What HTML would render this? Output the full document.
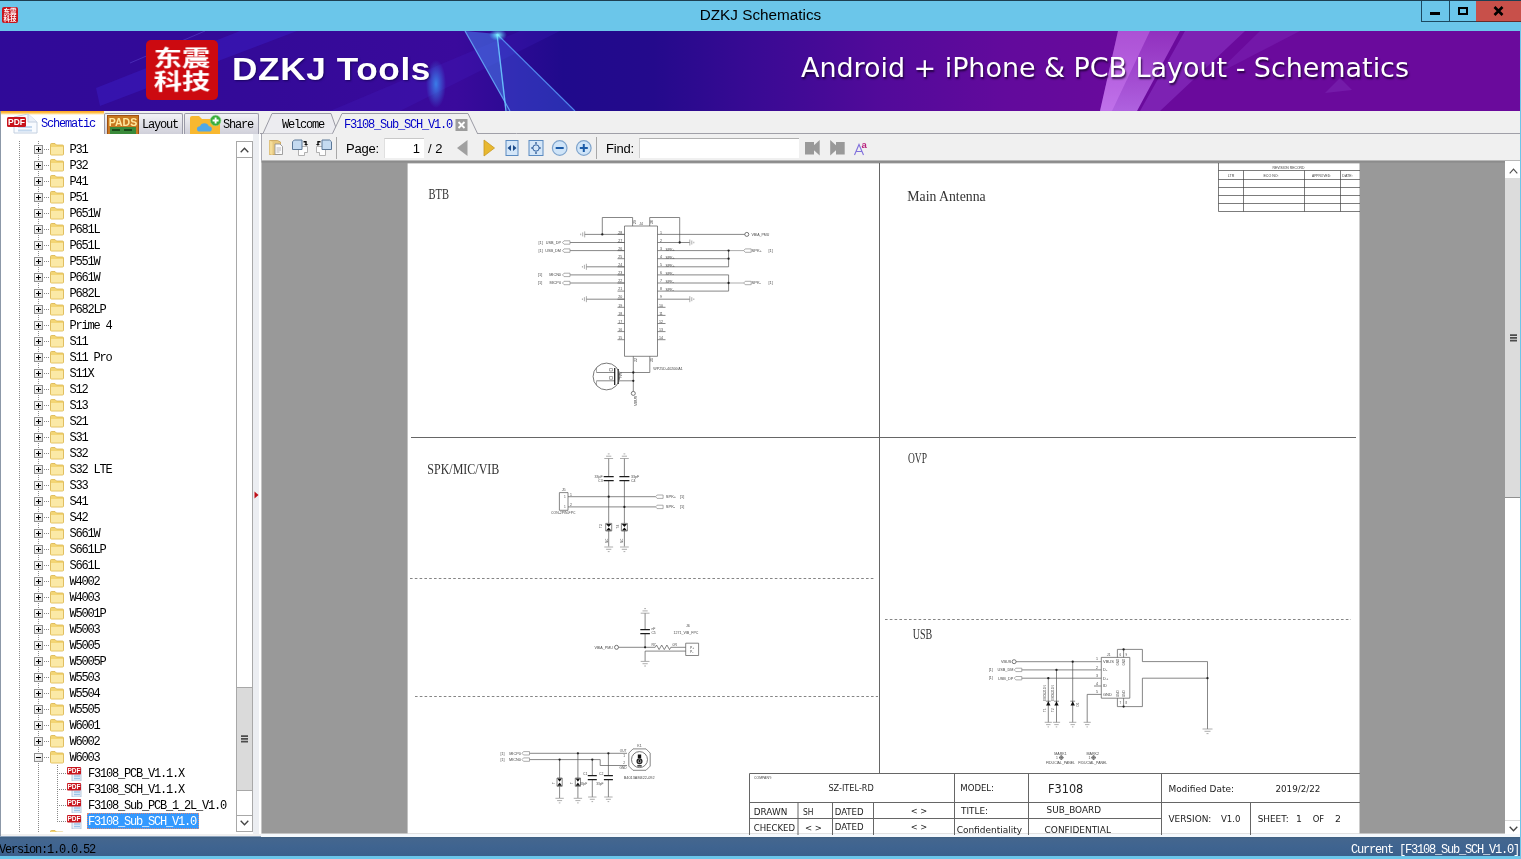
<!DOCTYPE html><html><head><meta charset="utf-8"><title>DZKJ Schematics</title><style>
*{box-sizing:border-box}
html,body{margin:0;padding:0}
body{width:1521px;height:859px;position:relative;overflow:hidden;background:#f0f0f0;font-family:"Liberation Sans",sans-serif}
.abs{position:absolute}
body>*{will-change:transform}
#titlebar{left:0;top:0;width:1521px;height:31px;background:#6bc6ea;border-top:1px solid #1d3f52}
#title{left:0;top:5px;width:1521px;text-align:center;font-size:15.3px;color:#000;line-height:20px}
#banner{left:0;top:31px;width:1520px;height:80px;overflow:hidden;background:linear-gradient(90deg,#300a98 0%,#340a98 18%,#3a0a9c 30%,#200a8c 37%,#240a8c 43%,#3a0a94 50%,#520a9a 58%,#620a9c 66%,#6a0a9c 75%,#6a0a9c 100%)}
.mono{font-family:"Liberation Mono","Noto Sans CJK SC",monospace;font-size:12px;letter-spacing:-1.2px;white-space:pre;line-height:14px;color:#000}
#left{left:1px;top:134px;width:252px;height:700px;background:#fff;overflow:hidden}
#status{left:0;top:836px;width:1520px;height:20px;border-top:1px solid #8ea3bd;background:linear-gradient(#3f5f80 0,#44668e 2px,#3f6490 50%,#3b608c)}
.row{position:absolute;left:0;height:16px;width:236px}
.pm{position:absolute;left:33px;width:9px;height:9px;border:1px solid #919191;background:linear-gradient(135deg,#fff,#dcdcdc)}
.pm:before{content:"";position:absolute;left:1px;top:3px;width:5px;height:1px;background:#000}
.pm.plus:after{content:"";position:absolute;left:3px;top:1px;width:1px;height:5px;background:#000}
.lbl{position:absolute;top:1px}
</style></head><body>
<div id="titlebar" class="abs"></div>
<div id="title" class="abs">DZKJ Schematics</div>
<div class="abs" style="left:2px;top:7px;width:16px;height:16px;background:#c8141c;border-radius:2px;color:#fff;font:6.5px/7px 'Noto Sans CJK SC','Liberation Sans',sans-serif;font-weight:bold;text-align:center;padding-top:1px;letter-spacing:0">东震<br>科技</div>
<div class="abs" style="left:1421px;top:1px;width:55px;height:21px;border:1px solid #1c4860;border-top:none;border-right:none"></div>
<div class="abs" style="left:1449px;top:1px;width:1px;height:21px;background:#1c4860"></div>
<div class="abs" style="left:1476px;top:1px;width:45px;height:21px;background:#c8504a;border-bottom:1px solid #6a2a28"></div>
<div class="abs" style="left:1430px;top:12px;width:10px;height:3px;background:#000"></div>
<div class="abs" style="left:1458px;top:7px;width:10px;height:8px;border:2px solid #000;border-top-width:2px"></div>
<svg class="abs" style="left:1493px;top:6px" width="11" height="10" viewBox="0 0 11 10"><path d="M1.5 1 L9.5 9 M9.5 1 L1.5 9" stroke="#000" stroke-width="2.6"/></svg>
<div id="banner" class="abs">
<svg class="abs" style="left:0;top:0" width="1520" height="80" viewBox="0 31 1520 80">
<defs><radialGradient id="glow"><stop offset="0" stop-color="#3aa0ff" stop-opacity=".75"/><stop offset="1" stop-color="#3aa0ff" stop-opacity="0"/></radialGradient><radialGradient id="star"><stop offset="0" stop-color="#8ff" stop-opacity=".95"/><stop offset="1" stop-color="#4cf" stop-opacity="0"/></radialGradient><linearGradient id="beam" x1="0" y1="0" x2="0" y2="1"><stop offset="0" stop-color="#4aa8ff" stop-opacity=".55"/><stop offset="1" stop-color="#3a78f0" stop-opacity=".45"/></linearGradient><linearGradient id="pk" x1="0" y1="0" x2="0" y2="1"><stop offset="0" stop-color="#c060e8" stop-opacity=".45"/><stop offset="1" stop-color="#c078f0" stop-opacity=".8"/></linearGradient></defs>
<path d="M240 31 L297 31 L100 106 L96 88 Z" fill="#3c22d0" opacity=".38"/>
<path d="M205 31 L130 63" stroke="#6a5ae0" stroke-width=".8" opacity=".5"/>
<path d="M330 111 L520 31 L560 31 L400 111 Z" fill="#4a28d0" opacity=".18"/>
<path d="M465 31 L497 34 L506 104 Z" fill="#4a8cf8" opacity=".5"/>
<path d="M497 34 L575 111 L507 111 L506 104 Z" fill="#3c6cf0" opacity=".36"/>
<path d="M465 31 L510 111" stroke="#6ab8ff" stroke-width="1.2" opacity=".8" fill="none"/>
<path d="M497 34 L506 111" stroke="#6cc8ff" stroke-width="1.4" opacity=".9" fill="none"/>
<path d="M497 34 L575 111" stroke="#5aa0ff" stroke-width="1.2" opacity=".8" fill="none"/>
<ellipse cx="498" cy="35" rx="9" ry="6" fill="url(#star)"/>
<ellipse cx="436" cy="84" rx="10" ry="24" fill="url(#glow)"/>
<path d="M1118 31 L1180 31 L1137 111 L1100 111 Z" fill="url(#pk)"/>
<path d="M1118 31 L1150 31 L1112 111 L1100 111 Z" fill="#e090ff" opacity=".35"/>
<path d="M1185 31 L1245 31 L1160 111 L1140 111 Z" fill="#a050e0" opacity=".35"/>
<path d="M1260 31 L1300 31 L1215 75 Z" fill="#9040d0" opacity=".25"/>
<path d="M1325 93 L1340 78 L1352 90 Z" fill="#a060e0" opacity=".2"/>
</svg>
</div>
<div class="abs" style="left:146px;top:40px;width:72px;height:60px;background:#cc0a10;border-radius:5px"></div>
<div class="abs" style="left:146px;top:40.500px;width:72px;text-align:center;color:#fff;font:bold 27px/28px 'Noto Sans CJK SC','Liberation Sans',sans-serif;letter-spacing:0;transform:scale(1.05,.83);transform-origin:36px 28px">东震<br>科技</div>
<div class="abs" style="left:231.5px;top:48.700px;font:bold 32px/40px 'Liberation Sans',sans-serif;color:#fff;text-shadow:1px 1px 2px rgba(0,0,40,.5);white-space:pre;transform:scaleX(1.10);transform-origin:0 0;letter-spacing:.55px">DZKJ Tools</div>
<div class="abs" style="left:801px;top:51.5px;letter-spacing:-.05px;font:27px/32px 'DejaVu Sans','Liberation Sans',sans-serif;color:#fff;text-shadow:1px 2px 2px rgba(20,0,40,.8);white-space:pre">Android + iPhone &amp; PCB Layout - Schematics</div>
<div class="abs" style="left:0;top:111px;width:1521px;height:23px;background:#f0f0f0"></div>
<div class="abs" style="left:1px;top:111px;width:103px;height:24px;background:linear-gradient(#ffa41c 0,#ffc452 2px,#ffe6b0 3px,#fff 4px)"></div>
<div class="abs" style="left:104px;top:113px;width:79px;height:21px;background:linear-gradient(#f2f2f6,#d0d0da);border:1px solid #9a9aa8;border-bottom:none;border-radius:2px 2px 0 0"></div>
<div class="abs" style="left:184px;top:113px;width:75px;height:21px;background:linear-gradient(#f2f2f6,#d0d0da);border:1px solid #9a9aa8;border-bottom:none;border-radius:2px 2px 0 0"></div>
<div class="abs mono" style="left:41px;top:117px;color:#0000c8">Schematic</div>
<div class="abs mono" style="left:142px;top:118px">Layout</div>
<div class="abs mono" style="left:223px;top:118px">Share</div>
<svg class="abs" style="left:6px;top:113px" width="34" height="22" viewBox="0 0 34 22"><path d="M8 4 L22 1 L31 9 L31 20 L8 20 Z" fill="#f8fbff" stroke="#c4d0e0" stroke-width="1"/><path d="M22 1 L22 9 L31 9" fill="#eaf0f8" stroke="#c4d0e0"/><path d="M12 14h14M12 17.500h14" stroke="#c4d8ee" stroke-width="1.800"/><rect x="1" y="4" width="19" height="10" rx="1.5" fill="#c8141c"/><text x="10.5" y="12.3" font-family="Liberation Sans,sans-serif" font-weight="bold" font-size="8.5" fill="#fff" text-anchor="middle">PDF</text></svg>
<svg class="abs" style="left:107px;top:115px" width="32" height="19" viewBox="0 0 32 19"><rect x=".5" y=".5" width="31" height="19" fill="#c87820" stroke="#a05010"/><rect x="3" y="12" width="26" height="7" fill="#3a8a3a"/><rect x="5" y="14" width="8" height="2" fill="#1a4a1a"/><rect x="17" y="14" width="8" height="2" fill="#1a4a1a"/><text x="16" y="10.5" font-family="Liberation Sans,sans-serif" font-weight="bold" font-size="10.5" fill="#ffe9a0" text-anchor="middle">PADS</text></svg>
<svg class="abs" style="left:188px;top:113px" width="34" height="22" viewBox="0 0 34 22"><path d="M2 5 Q2 3 4 3 L11 3 L14 6 L30 6 Q32 6 32 8 L32 22 L2 22 Z" fill="#f8b830"/><path d="M12 18.500 q-3 0 -3 -2.600 q0 -2.600 3 -2.600 q1 -3 4.400 -3 q3.400 0 4.400 3 q3 0 3 2.600 q0 2.600 -3 2.600 Z" fill="#50a8e8"/><circle cx="27.600" cy="7.500" r="5.300" fill="#3aae3c" stroke="#8fd48f" stroke-width=".6"/><path d="M24.600 7.500h6M27.600 4.500v6" stroke="#fff" stroke-width="1.900"/></svg>
<svg class="abs" style="left:260px;top:111px" width="1261" height="25" viewBox="260 111 1261 25">
<path d="M260 133.500 H1521" stroke="#a0a0a8" stroke-width="1" fill="none"/>
<path d="M263 133.500 L272 113.500 L331 113.500 L338 133.500" fill="#ececf0" stroke="#9a9aa4" stroke-width="1"/>
<path d="M332.500 134.500 L342 113.500 L468 113.500 L477.500 134.500 Z" fill="#f0f0f0" stroke="none"/>
<path d="M332.500 133.500 L342 113.500 L468 113.500 L477.500 133.500" fill="none" stroke="#9a9aa4" stroke-width="1"/>
<rect x="455.500" y="119" width="12" height="12" fill="#9c9c9c"/><path d="M458.500 122 l6 6 M464.500 122 l-6 6" stroke="#fff" stroke-width="1.800"/>
</svg>
<div class="abs mono" style="left:282px;top:118px">Welcome</div>
<div class="abs mono" style="left:344px;top:118px;color:#0000c8">F3108_Sub_SCH_V1.0</div><div id="left" class="abs">
<div class="abs" style="left:18px;top:7px;width:1px;height:700px;background:repeating-linear-gradient(#888 0 1px,transparent 1px 2px)"></div>
<div class="abs" style="left:37px;top:7px;width:1px;height:700px;background:repeating-linear-gradient(#888 0 1px,transparent 1px 2px)"></div>
<div class="row" style="top:7px"><div class="abs" style="left:43px;top:8px;width:6px;height:1px;background:repeating-linear-gradient(90deg,#888 0 1px,transparent 1px 2px)"></div><div class="pm plus" style="top:4px"></div><svg class="abs" style="left:47.800px;top:0" width="16" height="16" viewBox="0 0 16 16"><path d="M1.500 3.500 Q1.500 2.500 2.500 2.500 L6 2.500 L7.500 4 L13.500 4 Q14.500 4 14.500 5 L14.500 13 Q14.500 14 13.500 14 L2.500 14 Q1.500 14 1.500 13 Z" fill="#f3d574" stroke="#d9b24a" stroke-width=".8"/><path d="M2 6 H14 V13 Q14 13.500 13.500 13.500 H2.500 Q2 13.500 2 13 Z" fill="#fbe9a6"/></svg><span class="abs mono" style="left:68.600px;top:2px">P31</span></div>
<div class="row" style="top:23px"><div class="abs" style="left:43px;top:8px;width:6px;height:1px;background:repeating-linear-gradient(90deg,#888 0 1px,transparent 1px 2px)"></div><div class="pm plus" style="top:4px"></div><svg class="abs" style="left:47.800px;top:0" width="16" height="16" viewBox="0 0 16 16"><path d="M1.500 3.500 Q1.500 2.500 2.500 2.500 L6 2.500 L7.500 4 L13.500 4 Q14.500 4 14.500 5 L14.500 13 Q14.500 14 13.500 14 L2.500 14 Q1.500 14 1.500 13 Z" fill="#f3d574" stroke="#d9b24a" stroke-width=".8"/><path d="M2 6 H14 V13 Q14 13.500 13.500 13.500 H2.500 Q2 13.500 2 13 Z" fill="#fbe9a6"/></svg><span class="abs mono" style="left:68.600px;top:2px">P32</span></div>
<div class="row" style="top:39px"><div class="abs" style="left:43px;top:8px;width:6px;height:1px;background:repeating-linear-gradient(90deg,#888 0 1px,transparent 1px 2px)"></div><div class="pm plus" style="top:4px"></div><svg class="abs" style="left:47.800px;top:0" width="16" height="16" viewBox="0 0 16 16"><path d="M1.500 3.500 Q1.500 2.500 2.500 2.500 L6 2.500 L7.500 4 L13.500 4 Q14.500 4 14.500 5 L14.500 13 Q14.500 14 13.500 14 L2.500 14 Q1.500 14 1.500 13 Z" fill="#f3d574" stroke="#d9b24a" stroke-width=".8"/><path d="M2 6 H14 V13 Q14 13.500 13.500 13.500 H2.500 Q2 13.500 2 13 Z" fill="#fbe9a6"/></svg><span class="abs mono" style="left:68.600px;top:2px">P41</span></div>
<div class="row" style="top:55px"><div class="abs" style="left:43px;top:8px;width:6px;height:1px;background:repeating-linear-gradient(90deg,#888 0 1px,transparent 1px 2px)"></div><div class="pm plus" style="top:4px"></div><svg class="abs" style="left:47.800px;top:0" width="16" height="16" viewBox="0 0 16 16"><path d="M1.500 3.500 Q1.500 2.500 2.500 2.500 L6 2.500 L7.500 4 L13.500 4 Q14.500 4 14.500 5 L14.500 13 Q14.500 14 13.500 14 L2.500 14 Q1.500 14 1.500 13 Z" fill="#f3d574" stroke="#d9b24a" stroke-width=".8"/><path d="M2 6 H14 V13 Q14 13.500 13.500 13.500 H2.500 Q2 13.500 2 13 Z" fill="#fbe9a6"/></svg><span class="abs mono" style="left:68.600px;top:2px">P51</span></div>
<div class="row" style="top:71px"><div class="abs" style="left:43px;top:8px;width:6px;height:1px;background:repeating-linear-gradient(90deg,#888 0 1px,transparent 1px 2px)"></div><div class="pm plus" style="top:4px"></div><svg class="abs" style="left:47.800px;top:0" width="16" height="16" viewBox="0 0 16 16"><path d="M1.500 3.500 Q1.500 2.500 2.500 2.500 L6 2.500 L7.500 4 L13.500 4 Q14.500 4 14.500 5 L14.500 13 Q14.500 14 13.500 14 L2.500 14 Q1.500 14 1.500 13 Z" fill="#f3d574" stroke="#d9b24a" stroke-width=".8"/><path d="M2 6 H14 V13 Q14 13.500 13.500 13.500 H2.500 Q2 13.500 2 13 Z" fill="#fbe9a6"/></svg><span class="abs mono" style="left:68.600px;top:2px">P651W</span></div>
<div class="row" style="top:87px"><div class="abs" style="left:43px;top:8px;width:6px;height:1px;background:repeating-linear-gradient(90deg,#888 0 1px,transparent 1px 2px)"></div><div class="pm plus" style="top:4px"></div><svg class="abs" style="left:47.800px;top:0" width="16" height="16" viewBox="0 0 16 16"><path d="M1.500 3.500 Q1.500 2.500 2.500 2.500 L6 2.500 L7.500 4 L13.500 4 Q14.500 4 14.500 5 L14.500 13 Q14.500 14 13.500 14 L2.500 14 Q1.500 14 1.500 13 Z" fill="#f3d574" stroke="#d9b24a" stroke-width=".8"/><path d="M2 6 H14 V13 Q14 13.500 13.500 13.500 H2.500 Q2 13.500 2 13 Z" fill="#fbe9a6"/></svg><span class="abs mono" style="left:68.600px;top:2px">P681L</span></div>
<div class="row" style="top:103px"><div class="abs" style="left:43px;top:8px;width:6px;height:1px;background:repeating-linear-gradient(90deg,#888 0 1px,transparent 1px 2px)"></div><div class="pm plus" style="top:4px"></div><svg class="abs" style="left:47.800px;top:0" width="16" height="16" viewBox="0 0 16 16"><path d="M1.500 3.500 Q1.500 2.500 2.500 2.500 L6 2.500 L7.500 4 L13.500 4 Q14.500 4 14.500 5 L14.500 13 Q14.500 14 13.500 14 L2.500 14 Q1.500 14 1.500 13 Z" fill="#f3d574" stroke="#d9b24a" stroke-width=".8"/><path d="M2 6 H14 V13 Q14 13.500 13.500 13.500 H2.500 Q2 13.500 2 13 Z" fill="#fbe9a6"/></svg><span class="abs mono" style="left:68.600px;top:2px">P651L</span></div>
<div class="row" style="top:119px"><div class="abs" style="left:43px;top:8px;width:6px;height:1px;background:repeating-linear-gradient(90deg,#888 0 1px,transparent 1px 2px)"></div><div class="pm plus" style="top:4px"></div><svg class="abs" style="left:47.800px;top:0" width="16" height="16" viewBox="0 0 16 16"><path d="M1.500 3.500 Q1.500 2.500 2.500 2.500 L6 2.500 L7.500 4 L13.500 4 Q14.500 4 14.500 5 L14.500 13 Q14.500 14 13.500 14 L2.500 14 Q1.500 14 1.500 13 Z" fill="#f3d574" stroke="#d9b24a" stroke-width=".8"/><path d="M2 6 H14 V13 Q14 13.500 13.500 13.500 H2.500 Q2 13.500 2 13 Z" fill="#fbe9a6"/></svg><span class="abs mono" style="left:68.600px;top:2px">P551W</span></div>
<div class="row" style="top:135px"><div class="abs" style="left:43px;top:8px;width:6px;height:1px;background:repeating-linear-gradient(90deg,#888 0 1px,transparent 1px 2px)"></div><div class="pm plus" style="top:4px"></div><svg class="abs" style="left:47.800px;top:0" width="16" height="16" viewBox="0 0 16 16"><path d="M1.500 3.500 Q1.500 2.500 2.500 2.500 L6 2.500 L7.500 4 L13.500 4 Q14.500 4 14.500 5 L14.500 13 Q14.500 14 13.500 14 L2.500 14 Q1.500 14 1.500 13 Z" fill="#f3d574" stroke="#d9b24a" stroke-width=".8"/><path d="M2 6 H14 V13 Q14 13.500 13.500 13.500 H2.500 Q2 13.500 2 13 Z" fill="#fbe9a6"/></svg><span class="abs mono" style="left:68.600px;top:2px">P661W</span></div>
<div class="row" style="top:151px"><div class="abs" style="left:43px;top:8px;width:6px;height:1px;background:repeating-linear-gradient(90deg,#888 0 1px,transparent 1px 2px)"></div><div class="pm plus" style="top:4px"></div><svg class="abs" style="left:47.800px;top:0" width="16" height="16" viewBox="0 0 16 16"><path d="M1.500 3.500 Q1.500 2.500 2.500 2.500 L6 2.500 L7.500 4 L13.500 4 Q14.500 4 14.500 5 L14.500 13 Q14.500 14 13.500 14 L2.500 14 Q1.500 14 1.500 13 Z" fill="#f3d574" stroke="#d9b24a" stroke-width=".8"/><path d="M2 6 H14 V13 Q14 13.500 13.500 13.500 H2.500 Q2 13.500 2 13 Z" fill="#fbe9a6"/></svg><span class="abs mono" style="left:68.600px;top:2px">P682L</span></div>
<div class="row" style="top:167px"><div class="abs" style="left:43px;top:8px;width:6px;height:1px;background:repeating-linear-gradient(90deg,#888 0 1px,transparent 1px 2px)"></div><div class="pm plus" style="top:4px"></div><svg class="abs" style="left:47.800px;top:0" width="16" height="16" viewBox="0 0 16 16"><path d="M1.500 3.500 Q1.500 2.500 2.500 2.500 L6 2.500 L7.500 4 L13.500 4 Q14.500 4 14.500 5 L14.500 13 Q14.500 14 13.500 14 L2.500 14 Q1.500 14 1.500 13 Z" fill="#f3d574" stroke="#d9b24a" stroke-width=".8"/><path d="M2 6 H14 V13 Q14 13.500 13.500 13.500 H2.500 Q2 13.500 2 13 Z" fill="#fbe9a6"/></svg><span class="abs mono" style="left:68.600px;top:2px">P682LP</span></div>
<div class="row" style="top:183px"><div class="abs" style="left:43px;top:8px;width:6px;height:1px;background:repeating-linear-gradient(90deg,#888 0 1px,transparent 1px 2px)"></div><div class="pm plus" style="top:4px"></div><svg class="abs" style="left:47.800px;top:0" width="16" height="16" viewBox="0 0 16 16"><path d="M1.500 3.500 Q1.500 2.500 2.500 2.500 L6 2.500 L7.500 4 L13.500 4 Q14.500 4 14.500 5 L14.500 13 Q14.500 14 13.500 14 L2.500 14 Q1.500 14 1.500 13 Z" fill="#f3d574" stroke="#d9b24a" stroke-width=".8"/><path d="M2 6 H14 V13 Q14 13.500 13.500 13.500 H2.500 Q2 13.500 2 13 Z" fill="#fbe9a6"/></svg><span class="abs mono" style="left:68.600px;top:2px">Prime 4</span></div>
<div class="row" style="top:199px"><div class="abs" style="left:43px;top:8px;width:6px;height:1px;background:repeating-linear-gradient(90deg,#888 0 1px,transparent 1px 2px)"></div><div class="pm plus" style="top:4px"></div><svg class="abs" style="left:47.800px;top:0" width="16" height="16" viewBox="0 0 16 16"><path d="M1.500 3.500 Q1.500 2.500 2.500 2.500 L6 2.500 L7.500 4 L13.500 4 Q14.500 4 14.500 5 L14.500 13 Q14.500 14 13.500 14 L2.500 14 Q1.500 14 1.500 13 Z" fill="#f3d574" stroke="#d9b24a" stroke-width=".8"/><path d="M2 6 H14 V13 Q14 13.500 13.500 13.500 H2.500 Q2 13.500 2 13 Z" fill="#fbe9a6"/></svg><span class="abs mono" style="left:68.600px;top:2px">S11</span></div>
<div class="row" style="top:215px"><div class="abs" style="left:43px;top:8px;width:6px;height:1px;background:repeating-linear-gradient(90deg,#888 0 1px,transparent 1px 2px)"></div><div class="pm plus" style="top:4px"></div><svg class="abs" style="left:47.800px;top:0" width="16" height="16" viewBox="0 0 16 16"><path d="M1.500 3.500 Q1.500 2.500 2.500 2.500 L6 2.500 L7.500 4 L13.500 4 Q14.500 4 14.500 5 L14.500 13 Q14.500 14 13.500 14 L2.500 14 Q1.500 14 1.500 13 Z" fill="#f3d574" stroke="#d9b24a" stroke-width=".8"/><path d="M2 6 H14 V13 Q14 13.500 13.500 13.500 H2.500 Q2 13.500 2 13 Z" fill="#fbe9a6"/></svg><span class="abs mono" style="left:68.600px;top:2px">S11 Pro</span></div>
<div class="row" style="top:231px"><div class="abs" style="left:43px;top:8px;width:6px;height:1px;background:repeating-linear-gradient(90deg,#888 0 1px,transparent 1px 2px)"></div><div class="pm plus" style="top:4px"></div><svg class="abs" style="left:47.800px;top:0" width="16" height="16" viewBox="0 0 16 16"><path d="M1.500 3.500 Q1.500 2.500 2.500 2.500 L6 2.500 L7.500 4 L13.500 4 Q14.500 4 14.500 5 L14.500 13 Q14.500 14 13.500 14 L2.500 14 Q1.500 14 1.500 13 Z" fill="#f3d574" stroke="#d9b24a" stroke-width=".8"/><path d="M2 6 H14 V13 Q14 13.500 13.500 13.500 H2.500 Q2 13.500 2 13 Z" fill="#fbe9a6"/></svg><span class="abs mono" style="left:68.600px;top:2px">S11X</span></div>
<div class="row" style="top:247px"><div class="abs" style="left:43px;top:8px;width:6px;height:1px;background:repeating-linear-gradient(90deg,#888 0 1px,transparent 1px 2px)"></div><div class="pm plus" style="top:4px"></div><svg class="abs" style="left:47.800px;top:0" width="16" height="16" viewBox="0 0 16 16"><path d="M1.500 3.500 Q1.500 2.500 2.500 2.500 L6 2.500 L7.500 4 L13.500 4 Q14.500 4 14.500 5 L14.500 13 Q14.500 14 13.500 14 L2.500 14 Q1.500 14 1.500 13 Z" fill="#f3d574" stroke="#d9b24a" stroke-width=".8"/><path d="M2 6 H14 V13 Q14 13.500 13.500 13.500 H2.500 Q2 13.500 2 13 Z" fill="#fbe9a6"/></svg><span class="abs mono" style="left:68.600px;top:2px">S12</span></div>
<div class="row" style="top:263px"><div class="abs" style="left:43px;top:8px;width:6px;height:1px;background:repeating-linear-gradient(90deg,#888 0 1px,transparent 1px 2px)"></div><div class="pm plus" style="top:4px"></div><svg class="abs" style="left:47.800px;top:0" width="16" height="16" viewBox="0 0 16 16"><path d="M1.500 3.500 Q1.500 2.500 2.500 2.500 L6 2.500 L7.500 4 L13.500 4 Q14.500 4 14.500 5 L14.500 13 Q14.500 14 13.500 14 L2.500 14 Q1.500 14 1.500 13 Z" fill="#f3d574" stroke="#d9b24a" stroke-width=".8"/><path d="M2 6 H14 V13 Q14 13.500 13.500 13.500 H2.500 Q2 13.500 2 13 Z" fill="#fbe9a6"/></svg><span class="abs mono" style="left:68.600px;top:2px">S13</span></div>
<div class="row" style="top:279px"><div class="abs" style="left:43px;top:8px;width:6px;height:1px;background:repeating-linear-gradient(90deg,#888 0 1px,transparent 1px 2px)"></div><div class="pm plus" style="top:4px"></div><svg class="abs" style="left:47.800px;top:0" width="16" height="16" viewBox="0 0 16 16"><path d="M1.500 3.500 Q1.500 2.500 2.500 2.500 L6 2.500 L7.500 4 L13.500 4 Q14.500 4 14.500 5 L14.500 13 Q14.500 14 13.500 14 L2.500 14 Q1.500 14 1.500 13 Z" fill="#f3d574" stroke="#d9b24a" stroke-width=".8"/><path d="M2 6 H14 V13 Q14 13.500 13.500 13.500 H2.500 Q2 13.500 2 13 Z" fill="#fbe9a6"/></svg><span class="abs mono" style="left:68.600px;top:2px">S21</span></div>
<div class="row" style="top:295px"><div class="abs" style="left:43px;top:8px;width:6px;height:1px;background:repeating-linear-gradient(90deg,#888 0 1px,transparent 1px 2px)"></div><div class="pm plus" style="top:4px"></div><svg class="abs" style="left:47.800px;top:0" width="16" height="16" viewBox="0 0 16 16"><path d="M1.500 3.500 Q1.500 2.500 2.500 2.500 L6 2.500 L7.500 4 L13.500 4 Q14.500 4 14.500 5 L14.500 13 Q14.500 14 13.500 14 L2.500 14 Q1.500 14 1.500 13 Z" fill="#f3d574" stroke="#d9b24a" stroke-width=".8"/><path d="M2 6 H14 V13 Q14 13.500 13.500 13.500 H2.500 Q2 13.500 2 13 Z" fill="#fbe9a6"/></svg><span class="abs mono" style="left:68.600px;top:2px">S31</span></div>
<div class="row" style="top:311px"><div class="abs" style="left:43px;top:8px;width:6px;height:1px;background:repeating-linear-gradient(90deg,#888 0 1px,transparent 1px 2px)"></div><div class="pm plus" style="top:4px"></div><svg class="abs" style="left:47.800px;top:0" width="16" height="16" viewBox="0 0 16 16"><path d="M1.500 3.500 Q1.500 2.500 2.500 2.500 L6 2.500 L7.500 4 L13.500 4 Q14.500 4 14.500 5 L14.500 13 Q14.500 14 13.500 14 L2.500 14 Q1.500 14 1.500 13 Z" fill="#f3d574" stroke="#d9b24a" stroke-width=".8"/><path d="M2 6 H14 V13 Q14 13.500 13.500 13.500 H2.500 Q2 13.500 2 13 Z" fill="#fbe9a6"/></svg><span class="abs mono" style="left:68.600px;top:2px">S32</span></div>
<div class="row" style="top:327px"><div class="abs" style="left:43px;top:8px;width:6px;height:1px;background:repeating-linear-gradient(90deg,#888 0 1px,transparent 1px 2px)"></div><div class="pm plus" style="top:4px"></div><svg class="abs" style="left:47.800px;top:0" width="16" height="16" viewBox="0 0 16 16"><path d="M1.500 3.500 Q1.500 2.500 2.500 2.500 L6 2.500 L7.500 4 L13.500 4 Q14.500 4 14.500 5 L14.500 13 Q14.500 14 13.500 14 L2.500 14 Q1.500 14 1.500 13 Z" fill="#f3d574" stroke="#d9b24a" stroke-width=".8"/><path d="M2 6 H14 V13 Q14 13.500 13.500 13.500 H2.500 Q2 13.500 2 13 Z" fill="#fbe9a6"/></svg><span class="abs mono" style="left:68.600px;top:2px">S32 LTE</span></div>
<div class="row" style="top:343px"><div class="abs" style="left:43px;top:8px;width:6px;height:1px;background:repeating-linear-gradient(90deg,#888 0 1px,transparent 1px 2px)"></div><div class="pm plus" style="top:4px"></div><svg class="abs" style="left:47.800px;top:0" width="16" height="16" viewBox="0 0 16 16"><path d="M1.500 3.500 Q1.500 2.500 2.500 2.500 L6 2.500 L7.500 4 L13.500 4 Q14.500 4 14.500 5 L14.500 13 Q14.500 14 13.500 14 L2.500 14 Q1.500 14 1.500 13 Z" fill="#f3d574" stroke="#d9b24a" stroke-width=".8"/><path d="M2 6 H14 V13 Q14 13.500 13.500 13.500 H2.500 Q2 13.500 2 13 Z" fill="#fbe9a6"/></svg><span class="abs mono" style="left:68.600px;top:2px">S33</span></div>
<div class="row" style="top:359px"><div class="abs" style="left:43px;top:8px;width:6px;height:1px;background:repeating-linear-gradient(90deg,#888 0 1px,transparent 1px 2px)"></div><div class="pm plus" style="top:4px"></div><svg class="abs" style="left:47.800px;top:0" width="16" height="16" viewBox="0 0 16 16"><path d="M1.500 3.500 Q1.500 2.500 2.500 2.500 L6 2.500 L7.500 4 L13.500 4 Q14.500 4 14.500 5 L14.500 13 Q14.500 14 13.500 14 L2.500 14 Q1.500 14 1.500 13 Z" fill="#f3d574" stroke="#d9b24a" stroke-width=".8"/><path d="M2 6 H14 V13 Q14 13.500 13.500 13.500 H2.500 Q2 13.500 2 13 Z" fill="#fbe9a6"/></svg><span class="abs mono" style="left:68.600px;top:2px">S41</span></div>
<div class="row" style="top:375px"><div class="abs" style="left:43px;top:8px;width:6px;height:1px;background:repeating-linear-gradient(90deg,#888 0 1px,transparent 1px 2px)"></div><div class="pm plus" style="top:4px"></div><svg class="abs" style="left:47.800px;top:0" width="16" height="16" viewBox="0 0 16 16"><path d="M1.500 3.500 Q1.500 2.500 2.500 2.500 L6 2.500 L7.500 4 L13.500 4 Q14.500 4 14.500 5 L14.500 13 Q14.500 14 13.500 14 L2.500 14 Q1.500 14 1.500 13 Z" fill="#f3d574" stroke="#d9b24a" stroke-width=".8"/><path d="M2 6 H14 V13 Q14 13.500 13.500 13.500 H2.500 Q2 13.500 2 13 Z" fill="#fbe9a6"/></svg><span class="abs mono" style="left:68.600px;top:2px">S42</span></div>
<div class="row" style="top:391px"><div class="abs" style="left:43px;top:8px;width:6px;height:1px;background:repeating-linear-gradient(90deg,#888 0 1px,transparent 1px 2px)"></div><div class="pm plus" style="top:4px"></div><svg class="abs" style="left:47.800px;top:0" width="16" height="16" viewBox="0 0 16 16"><path d="M1.500 3.500 Q1.500 2.500 2.500 2.500 L6 2.500 L7.500 4 L13.500 4 Q14.500 4 14.500 5 L14.500 13 Q14.500 14 13.500 14 L2.500 14 Q1.500 14 1.500 13 Z" fill="#f3d574" stroke="#d9b24a" stroke-width=".8"/><path d="M2 6 H14 V13 Q14 13.500 13.500 13.500 H2.500 Q2 13.500 2 13 Z" fill="#fbe9a6"/></svg><span class="abs mono" style="left:68.600px;top:2px">S661W</span></div>
<div class="row" style="top:407px"><div class="abs" style="left:43px;top:8px;width:6px;height:1px;background:repeating-linear-gradient(90deg,#888 0 1px,transparent 1px 2px)"></div><div class="pm plus" style="top:4px"></div><svg class="abs" style="left:47.800px;top:0" width="16" height="16" viewBox="0 0 16 16"><path d="M1.500 3.500 Q1.500 2.500 2.500 2.500 L6 2.500 L7.500 4 L13.500 4 Q14.500 4 14.500 5 L14.500 13 Q14.500 14 13.500 14 L2.500 14 Q1.500 14 1.500 13 Z" fill="#f3d574" stroke="#d9b24a" stroke-width=".8"/><path d="M2 6 H14 V13 Q14 13.500 13.500 13.500 H2.500 Q2 13.500 2 13 Z" fill="#fbe9a6"/></svg><span class="abs mono" style="left:68.600px;top:2px">S661LP</span></div>
<div class="row" style="top:423px"><div class="abs" style="left:43px;top:8px;width:6px;height:1px;background:repeating-linear-gradient(90deg,#888 0 1px,transparent 1px 2px)"></div><div class="pm plus" style="top:4px"></div><svg class="abs" style="left:47.800px;top:0" width="16" height="16" viewBox="0 0 16 16"><path d="M1.500 3.500 Q1.500 2.500 2.500 2.500 L6 2.500 L7.500 4 L13.500 4 Q14.500 4 14.500 5 L14.500 13 Q14.500 14 13.500 14 L2.500 14 Q1.500 14 1.500 13 Z" fill="#f3d574" stroke="#d9b24a" stroke-width=".8"/><path d="M2 6 H14 V13 Q14 13.500 13.500 13.500 H2.500 Q2 13.500 2 13 Z" fill="#fbe9a6"/></svg><span class="abs mono" style="left:68.600px;top:2px">S661L</span></div>
<div class="row" style="top:439px"><div class="abs" style="left:43px;top:8px;width:6px;height:1px;background:repeating-linear-gradient(90deg,#888 0 1px,transparent 1px 2px)"></div><div class="pm plus" style="top:4px"></div><svg class="abs" style="left:47.800px;top:0" width="16" height="16" viewBox="0 0 16 16"><path d="M1.500 3.500 Q1.500 2.500 2.500 2.500 L6 2.500 L7.500 4 L13.500 4 Q14.500 4 14.500 5 L14.500 13 Q14.500 14 13.500 14 L2.500 14 Q1.500 14 1.500 13 Z" fill="#f3d574" stroke="#d9b24a" stroke-width=".8"/><path d="M2 6 H14 V13 Q14 13.500 13.500 13.500 H2.500 Q2 13.500 2 13 Z" fill="#fbe9a6"/></svg><span class="abs mono" style="left:68.600px;top:2px">W4002</span></div>
<div class="row" style="top:455px"><div class="abs" style="left:43px;top:8px;width:6px;height:1px;background:repeating-linear-gradient(90deg,#888 0 1px,transparent 1px 2px)"></div><div class="pm plus" style="top:4px"></div><svg class="abs" style="left:47.800px;top:0" width="16" height="16" viewBox="0 0 16 16"><path d="M1.500 3.500 Q1.500 2.500 2.500 2.500 L6 2.500 L7.500 4 L13.500 4 Q14.500 4 14.500 5 L14.500 13 Q14.500 14 13.500 14 L2.500 14 Q1.500 14 1.500 13 Z" fill="#f3d574" stroke="#d9b24a" stroke-width=".8"/><path d="M2 6 H14 V13 Q14 13.500 13.500 13.500 H2.500 Q2 13.500 2 13 Z" fill="#fbe9a6"/></svg><span class="abs mono" style="left:68.600px;top:2px">W4003</span></div>
<div class="row" style="top:471px"><div class="abs" style="left:43px;top:8px;width:6px;height:1px;background:repeating-linear-gradient(90deg,#888 0 1px,transparent 1px 2px)"></div><div class="pm plus" style="top:4px"></div><svg class="abs" style="left:47.800px;top:0" width="16" height="16" viewBox="0 0 16 16"><path d="M1.500 3.500 Q1.500 2.500 2.500 2.500 L6 2.500 L7.500 4 L13.500 4 Q14.500 4 14.500 5 L14.500 13 Q14.500 14 13.500 14 L2.500 14 Q1.500 14 1.500 13 Z" fill="#f3d574" stroke="#d9b24a" stroke-width=".8"/><path d="M2 6 H14 V13 Q14 13.500 13.500 13.500 H2.500 Q2 13.500 2 13 Z" fill="#fbe9a6"/></svg><span class="abs mono" style="left:68.600px;top:2px">W5001P</span></div>
<div class="row" style="top:487px"><div class="abs" style="left:43px;top:8px;width:6px;height:1px;background:repeating-linear-gradient(90deg,#888 0 1px,transparent 1px 2px)"></div><div class="pm plus" style="top:4px"></div><svg class="abs" style="left:47.800px;top:0" width="16" height="16" viewBox="0 0 16 16"><path d="M1.500 3.500 Q1.500 2.500 2.500 2.500 L6 2.500 L7.500 4 L13.500 4 Q14.500 4 14.500 5 L14.500 13 Q14.500 14 13.500 14 L2.500 14 Q1.500 14 1.500 13 Z" fill="#f3d574" stroke="#d9b24a" stroke-width=".8"/><path d="M2 6 H14 V13 Q14 13.500 13.500 13.500 H2.500 Q2 13.500 2 13 Z" fill="#fbe9a6"/></svg><span class="abs mono" style="left:68.600px;top:2px">W5003</span></div>
<div class="row" style="top:503px"><div class="abs" style="left:43px;top:8px;width:6px;height:1px;background:repeating-linear-gradient(90deg,#888 0 1px,transparent 1px 2px)"></div><div class="pm plus" style="top:4px"></div><svg class="abs" style="left:47.800px;top:0" width="16" height="16" viewBox="0 0 16 16"><path d="M1.500 3.500 Q1.500 2.500 2.500 2.500 L6 2.500 L7.500 4 L13.500 4 Q14.500 4 14.500 5 L14.500 13 Q14.500 14 13.500 14 L2.500 14 Q1.500 14 1.500 13 Z" fill="#f3d574" stroke="#d9b24a" stroke-width=".8"/><path d="M2 6 H14 V13 Q14 13.500 13.500 13.500 H2.500 Q2 13.500 2 13 Z" fill="#fbe9a6"/></svg><span class="abs mono" style="left:68.600px;top:2px">W5005</span></div>
<div class="row" style="top:519px"><div class="abs" style="left:43px;top:8px;width:6px;height:1px;background:repeating-linear-gradient(90deg,#888 0 1px,transparent 1px 2px)"></div><div class="pm plus" style="top:4px"></div><svg class="abs" style="left:47.800px;top:0" width="16" height="16" viewBox="0 0 16 16"><path d="M1.500 3.500 Q1.500 2.500 2.500 2.500 L6 2.500 L7.500 4 L13.500 4 Q14.500 4 14.500 5 L14.500 13 Q14.500 14 13.500 14 L2.500 14 Q1.500 14 1.500 13 Z" fill="#f3d574" stroke="#d9b24a" stroke-width=".8"/><path d="M2 6 H14 V13 Q14 13.500 13.500 13.500 H2.500 Q2 13.500 2 13 Z" fill="#fbe9a6"/></svg><span class="abs mono" style="left:68.600px;top:2px">W5005P</span></div>
<div class="row" style="top:535px"><div class="abs" style="left:43px;top:8px;width:6px;height:1px;background:repeating-linear-gradient(90deg,#888 0 1px,transparent 1px 2px)"></div><div class="pm plus" style="top:4px"></div><svg class="abs" style="left:47.800px;top:0" width="16" height="16" viewBox="0 0 16 16"><path d="M1.500 3.500 Q1.500 2.500 2.500 2.500 L6 2.500 L7.500 4 L13.500 4 Q14.500 4 14.500 5 L14.500 13 Q14.500 14 13.500 14 L2.500 14 Q1.500 14 1.500 13 Z" fill="#f3d574" stroke="#d9b24a" stroke-width=".8"/><path d="M2 6 H14 V13 Q14 13.500 13.500 13.500 H2.500 Q2 13.500 2 13 Z" fill="#fbe9a6"/></svg><span class="abs mono" style="left:68.600px;top:2px">W5503</span></div>
<div class="row" style="top:551px"><div class="abs" style="left:43px;top:8px;width:6px;height:1px;background:repeating-linear-gradient(90deg,#888 0 1px,transparent 1px 2px)"></div><div class="pm plus" style="top:4px"></div><svg class="abs" style="left:47.800px;top:0" width="16" height="16" viewBox="0 0 16 16"><path d="M1.500 3.500 Q1.500 2.500 2.500 2.500 L6 2.500 L7.500 4 L13.500 4 Q14.500 4 14.500 5 L14.500 13 Q14.500 14 13.500 14 L2.500 14 Q1.500 14 1.500 13 Z" fill="#f3d574" stroke="#d9b24a" stroke-width=".8"/><path d="M2 6 H14 V13 Q14 13.500 13.500 13.500 H2.500 Q2 13.500 2 13 Z" fill="#fbe9a6"/></svg><span class="abs mono" style="left:68.600px;top:2px">W5504</span></div>
<div class="row" style="top:567px"><div class="abs" style="left:43px;top:8px;width:6px;height:1px;background:repeating-linear-gradient(90deg,#888 0 1px,transparent 1px 2px)"></div><div class="pm plus" style="top:4px"></div><svg class="abs" style="left:47.800px;top:0" width="16" height="16" viewBox="0 0 16 16"><path d="M1.500 3.500 Q1.500 2.500 2.500 2.500 L6 2.500 L7.500 4 L13.500 4 Q14.500 4 14.500 5 L14.500 13 Q14.500 14 13.500 14 L2.500 14 Q1.500 14 1.500 13 Z" fill="#f3d574" stroke="#d9b24a" stroke-width=".8"/><path d="M2 6 H14 V13 Q14 13.500 13.500 13.500 H2.500 Q2 13.500 2 13 Z" fill="#fbe9a6"/></svg><span class="abs mono" style="left:68.600px;top:2px">W5505</span></div>
<div class="row" style="top:583px"><div class="abs" style="left:43px;top:8px;width:6px;height:1px;background:repeating-linear-gradient(90deg,#888 0 1px,transparent 1px 2px)"></div><div class="pm plus" style="top:4px"></div><svg class="abs" style="left:47.800px;top:0" width="16" height="16" viewBox="0 0 16 16"><path d="M1.500 3.500 Q1.500 2.500 2.500 2.500 L6 2.500 L7.500 4 L13.500 4 Q14.500 4 14.500 5 L14.500 13 Q14.500 14 13.500 14 L2.500 14 Q1.500 14 1.500 13 Z" fill="#f3d574" stroke="#d9b24a" stroke-width=".8"/><path d="M2 6 H14 V13 Q14 13.500 13.500 13.500 H2.500 Q2 13.500 2 13 Z" fill="#fbe9a6"/></svg><span class="abs mono" style="left:68.600px;top:2px">W6001</span></div>
<div class="row" style="top:599px"><div class="abs" style="left:43px;top:8px;width:6px;height:1px;background:repeating-linear-gradient(90deg,#888 0 1px,transparent 1px 2px)"></div><div class="pm plus" style="top:4px"></div><svg class="abs" style="left:47.800px;top:0" width="16" height="16" viewBox="0 0 16 16"><path d="M1.500 3.500 Q1.500 2.500 2.500 2.500 L6 2.500 L7.500 4 L13.500 4 Q14.500 4 14.500 5 L14.500 13 Q14.500 14 13.500 14 L2.500 14 Q1.500 14 1.500 13 Z" fill="#f3d574" stroke="#d9b24a" stroke-width=".8"/><path d="M2 6 H14 V13 Q14 13.500 13.500 13.500 H2.500 Q2 13.500 2 13 Z" fill="#fbe9a6"/></svg><span class="abs mono" style="left:68.600px;top:2px">W6002</span></div>
<div class="row" style="top:615px"><div class="abs" style="left:43px;top:8px;width:6px;height:1px;background:repeating-linear-gradient(90deg,#888 0 1px,transparent 1px 2px)"></div><div class="pm" style="top:4px"></div><svg class="abs" style="left:47.800px;top:0" width="16" height="16" viewBox="0 0 16 16"><path d="M1.500 3.500 Q1.500 2.500 2.500 2.500 L6 2.500 L7.500 4 L13.500 4 Q14.500 4 14.500 5 L14.500 13 Q14.500 14 13.500 14 L2.500 14 Q1.500 14 1.500 13 Z" fill="#f3d574" stroke="#d9b24a" stroke-width=".8"/><path d="M2 6 H14 V13 Q14 13.500 13.500 13.500 H2.500 Q2 13.500 2 13 Z" fill="#fbe9a6"/></svg><span class="abs mono" style="left:68.600px;top:2px">W6003</span></div>
<div class="row" style="top:631px"><div class="abs" style="left:56px;top:8px;width:10px;height:1px;background:repeating-linear-gradient(90deg,#888 0 1px,transparent 1px 2px)"></div><svg class="abs" style="left:66px;top:0" width="17" height="16" viewBox="0 0 17 16"><path d="M5 3 H14 V16 H5 Z" fill="#e8f0fa" stroke="#a8bcd4" stroke-width=".8"/><path d="M7 11h6M7 13.500h6" stroke="#9cc4e8" stroke-width="1.500"/><rect x="0" y="2" width="14" height="7.500" rx="1" fill="#c8141c"/><text x="7" y="8.300" font-family="Liberation Sans,sans-serif" font-weight="bold" font-size="6.500" fill="#fff" text-anchor="middle">PDF</text></svg><span class="abs mono" style="left:87px;top:2px">F3108_PCB_V1.1.X</span></div>
<div class="row" style="top:647px"><div class="abs" style="left:56px;top:8px;width:10px;height:1px;background:repeating-linear-gradient(90deg,#888 0 1px,transparent 1px 2px)"></div><svg class="abs" style="left:66px;top:0" width="17" height="16" viewBox="0 0 17 16"><path d="M5 3 H14 V16 H5 Z" fill="#e8f0fa" stroke="#a8bcd4" stroke-width=".8"/><path d="M7 11h6M7 13.500h6" stroke="#9cc4e8" stroke-width="1.500"/><rect x="0" y="2" width="14" height="7.500" rx="1" fill="#c8141c"/><text x="7" y="8.300" font-family="Liberation Sans,sans-serif" font-weight="bold" font-size="6.500" fill="#fff" text-anchor="middle">PDF</text></svg><span class="abs mono" style="left:87px;top:2px">F3108_SCH_V1.1.X</span></div>
<div class="row" style="top:663px"><div class="abs" style="left:56px;top:8px;width:10px;height:1px;background:repeating-linear-gradient(90deg,#888 0 1px,transparent 1px 2px)"></div><svg class="abs" style="left:66px;top:0" width="17" height="16" viewBox="0 0 17 16"><path d="M5 3 H14 V16 H5 Z" fill="#e8f0fa" stroke="#a8bcd4" stroke-width=".8"/><path d="M7 11h6M7 13.500h6" stroke="#9cc4e8" stroke-width="1.500"/><rect x="0" y="2" width="14" height="7.500" rx="1" fill="#c8141c"/><text x="7" y="8.300" font-family="Liberation Sans,sans-serif" font-weight="bold" font-size="6.500" fill="#fff" text-anchor="middle">PDF</text></svg><span class="abs mono" style="left:87px;top:2px">F3108_Sub_PCB_1_2L_V1.0</span></div>
<div class="row" style="top:679px"><div class="abs" style="left:56px;top:8px;width:10px;height:1px;background:repeating-linear-gradient(90deg,#888 0 1px,transparent 1px 2px)"></div><svg class="abs" style="left:66px;top:0" width="17" height="16" viewBox="0 0 17 16"><path d="M5 3 H14 V16 H5 Z" fill="#e8f0fa" stroke="#a8bcd4" stroke-width=".8"/><path d="M7 11h6M7 13.500h6" stroke="#9cc4e8" stroke-width="1.500"/><rect x="0" y="2" width="14" height="7.500" rx="1" fill="#c8141c"/><text x="7" y="8.300" font-family="Liberation Sans,sans-serif" font-weight="bold" font-size="6.500" fill="#fff" text-anchor="middle">PDF</text></svg><span class="abs mono" style="left:86px;top:0;padding:2px 3px 0 1px;background:#3399ff;color:#fff;outline:1px dotted #d87;outline-offset:-1px;height:16px">F3108_Sub_SCH_V1.0</span></div>
<div class="abs" style="left:56px;top:631px;width:1px;height:56px;background:repeating-linear-gradient(#888 0 1px,transparent 1px 2px)"></div>
<svg class="abs" style="left:47.800px;top:694px" width="16" height="16" viewBox="0 0 16 16"><path d="M1.500 3.500 Q1.500 2.500 2.500 2.500 L6 2.500 L7.500 4 L13.500 4 Q14.500 4 14.500 5 L14.500 13 L1.500 13 Z" fill="#f3d574" stroke="#d9b24a" stroke-width=".8"/></svg>
<div class="abs" style="left:0;top:698px;width:235px;height:2px;background:#fff"></div>
<div class="abs" style="left:235px;top:7px;width:17px;height:691px;background:#fff;border:1px solid #a8a8a8"></div>
<div class="abs" style="left:235px;top:23px;width:17px;height:1px;background:#a8a8a8"></div>
<div class="abs" style="left:235px;top:681px;width:17px;height:1px;background:#a8a8a8"></div>
<svg class="abs" style="left:239px;top:13px" width="9" height="6" viewBox="0 0 9 6"><path d="M.7 5.300 L4.500 1.200 L8.300 5.300" fill="none" stroke="#444" stroke-width="1.300"/></svg>
<svg class="abs" style="left:239px;top:686px" width="9" height="6" viewBox="0 0 9 6"><path d="M.7 .7 L4.500 4.800 L8.300 .7" fill="none" stroke="#444" stroke-width="1.300"/></svg>
<div class="abs" style="left:236px;top:553px;width:15px;height:104px;background:#dadada;border-top:1px solid #a8a8a8;border-bottom:1px solid #a8a8a8"></div>
<svg class="abs" style="left:239px;top:600px" width="9" height="10" viewBox="0 0 9 10"><path d="M1 2.100h7M1 4.900h7M1 7.700h7" stroke="#4c4c4c" stroke-width="1.700"/></svg>
</div>
<div class="abs" style="left:253px;top:134px;width:8px;height:700px;background:linear-gradient(90deg,#eceef2 0 6px,#fff 6px)"></div>
<svg class="abs" style="left:254px;top:491px" width="5" height="8" viewBox="0 0 5 8"><path d="M.5 .5 L4.500 4 L.5 7.500 Z" fill="#c01018"/></svg>
<div class="abs" style="left:0;top:111px;width:1px;height:725px;background:#8c98a8"></div>
<div class="abs" style="left:261px;top:134px;width:1259px;height:27px;background:#f0f0f0;border-left:1px solid #a8a8b0;border-bottom:1px solid #b8b8b8"></div>
<svg class="abs" style="left:266px;top:136px" width="70" height="24" viewBox="266 136 70 24"><path d="M269.500 140.500 h8 l3 1.500 v12.500 h-11 Z" fill="#e6c880" stroke="#c8a050" stroke-width=".8"/><path d="M269.500 140.500 l3 1.500 v13 l-3 -1 Z" fill="#f4dc98"/><path d="M275 144 h5 l2.500 2.500 v8 h-7.500 Z" fill="#fafafa" stroke="#8c8c8c" stroke-width=".8"/><path d="M276.500 148h4.500M276.500 150h4.500M276.500 152h3" stroke="#9a9aa0" stroke-width=".7"/><path d="M298.500 146.500 h9 v6 h-3 v3 h-6 Z" fill="#fdfdfd" stroke="#a8a8a8" stroke-width=".9"/><path d="M292.500 141.800 l1.800 -1.800 h7.700 v9.500 h-9.500 Z" fill="#c4daf0" stroke="#5c7898" stroke-width="1"/><path d="M303.500 141.800 h2.500 v2.200" fill="none" stroke="#111" stroke-width="1.400"/><path d="M304 144 h4.200 l-2.100 1.800 Z" fill="#111"/><path d="M325.500 146.500 h-9 v6 h3 v3 h6 Z" fill="#fdfdfd" stroke="#a8a8a8" stroke-width=".9"/><path d="M331.500 141.800 l-1.800 -1.800 h-7.700 v9.500 h9.500 Z" fill="#c4daf0" stroke="#5c7898" stroke-width="1"/><path d="M320.500 141.800 h-2.500 v2.200" fill="none" stroke="#111" stroke-width="1.400"/><path d="M320 144 h-4.200 l2.100 1.800 Z" fill="#111"/></svg>
<div class="abs" style="left:336px;top:137px;width:1px;height:22px;background:#a8a8a8"></div>
<div class="abs" style="left:346px;top:141px;font-size:13px;line-height:16px;color:#000;letter-spacing:-.2px">Page:</div>
<div class="abs" style="left:384px;top:138px;width:40px;height:20px;background:#fff;border-top:1px solid #c8c8c8;border-left:1px solid #e0e0e0"></div>
<div class="abs" style="left:384px;top:141px;width:36px;text-align:right;font-size:13px;line-height:16px;color:#000">1</div>
<div class="abs" style="left:428px;top:141px;font-size:13px;line-height:16px;color:#000;white-space:pre">/ 2</div>
<svg class="abs" style="left:455px;top:138px" width="140" height="20" viewBox="455 138 140 20"><path d="M467.500 140 L467.500 156 L457 148 Z" fill="#a0a0a0"/><path d="M484 140 L484 156 L494.500 148 Z" fill="#e8b830" stroke="#c89820" stroke-width=".8"/><rect x="506" y="140.500" width="12" height="15" fill="#d4e6f8" stroke="#5a8ac0" stroke-width="1"/><path d="M511 145 v6 l-3.500 -3 Z M513 145 v6 l3.500 -3 Z" fill="#1c4c8c"/><rect x="529" y="140.500" width="14" height="15" fill="#d4e6f8" stroke="#5a8ac0" stroke-width="1"/><circle cx="536" cy="148" r="3.200" fill="none" stroke="#2c5c9c" stroke-width="1"/><path d="M536 142 v2 M536 152 v2 M531 148 h2 M539 148 h2" stroke="#1c4c8c" stroke-width="1.200"/><circle cx="559.700" cy="148" r="7.300" fill="#cfe4f8" stroke="#7fa4cc" stroke-width="1.200"/><path d="M555.700 148 h8" stroke="#1c5ca8" stroke-width="2"/><circle cx="583.800" cy="148" r="7.300" fill="#cfe4f8" stroke="#7fa4cc" stroke-width="1.200"/><path d="M579.800 148 h8 M583.800 144 v8" stroke="#1c5ca8" stroke-width="2"/></svg>
<div class="abs" style="left:596px;top:137px;width:1px;height:22px;background:#a8a8a8"></div>
<div class="abs" style="left:606px;top:141px;font-size:13px;line-height:16px;color:#000;letter-spacing:-.2px">Find:</div>
<div class="abs" style="left:639px;top:138px;width:160px;height:20px;background:#fff;border-top:1px solid #b0b0b0;border-left:1px solid #d0d0d0"></div>
<svg class="abs" style="left:803px;top:138px" width="70" height="20" viewBox="803 138 70 20"><path d="M805 142 h9 v12.500 h-9 Z" fill="#999"/><path d="M819.700 140 v15.600 l-8.500 -7.800 Z" fill="#999"/><path d="M836 142 h8.700 v12.500 h-8.700 Z" fill="#999"/><path d="M830.200 140 v15.600 l8.500 -7.800 Z" fill="#999"/><path d="M854.500 155 l4.500 -10.500 l4.500 10.500 M856.300 151.500 h5.400" fill="none" stroke="#8070dc" stroke-width="1.100"/><text x="861.500" y="147.700" font-family="Liberation Sans,sans-serif" font-size="9.500" font-weight="bold" fill="#b8207c">a</text></svg>
<div id="status" class="abs"></div>
<div class="abs" style="left:0;top:856px;width:1521px;height:3px;background:#6bc6ea"></div>
<div class="abs mono" style="left:-1px;top:843px;color:#000">Version:1.0.0.52</div>
<div class="abs mono" style="right:2px;top:843px;color:#fff">Current [F3108_Sub_SCH_V1.0]</div><div class="abs" style="left:261px;top:834px;width:1259px;height:3px;background:#f5f9fd"></div>
<svg class="abs" style="left:261px;top:160px" width="1245" height="675" viewBox="261 160 1245 675">
<rect x="261.500" y="161" width="1244" height="672.500" fill="#999"/><rect x="261.500" y="161" width="1244" height="1.600" fill="#8c8c8c"/>
<rect x="407.600" y="163.400" width="951.900" height="670.100" fill="#fff"/>
<path d="M879.5 163L879.5 773.5M411 437.5L1356 437.5M749.5 773.5L1360 773.5M749.5 773.5L749.5 835M749.5 802.5L1360 802.5M749.5 818.5L1161.5 818.5M798 802.5L798 835M832.5 802.5L832.5 835M873.5 802.5L873.5 835M954.5 773.5L954.5 835M1028.5 773.5L1028.5 835M1161.5 773.5L1161.5 835M1250.5 802.5L1250.5 835" stroke="#666" stroke-width="1" fill="none"/>
<path d="M1218.5 163L1218.5 211.5M1218.5 170.5L1360 170.5M1218.5 179.5L1360 179.5M1218.5 187.5L1360 187.5M1218.5 195.5L1360 195.5M1218.5 203.5L1360 203.5M1218.5 211.5L1360 211.5M1243.5 170.5L1243.5 211.5M1304.5 170.5L1304.5 211.5M1340.5 170.5L1340.5 211.5" stroke="#444" stroke-width=".7" fill="none"/>
<path d="M410 578.5L874 578.5M415 696.5L878 696.5M885 619.5L1351 619.5" stroke="#777" stroke-width=".9" stroke-dasharray="2.6 2.2" fill="none"/>
<path d="M624.5 226L657.5 226L657.5 356.3L624.5 356.3ZM617.5 234.4L624.5 234.4M617.5 242.5L624.5 242.5M617.5 250.6L624.5 250.6M617.5 258.7L624.5 258.7M617.5 266.8L624.5 266.8M617.5 274.9L624.5 274.9M617.5 283L624.5 283M617.5 291.1L624.5 291.1M617.5 299.2L624.5 299.2M617.5 307.3L624.5 307.3M657.5 307.3L665.5 307.3M617.5 315.4L624.5 315.4M657.5 315.4L665.5 315.4M617.5 323.5L624.5 323.5M657.5 323.5L665.5 323.5M617.5 331.6L624.5 331.6M657.5 331.6L665.5 331.6M617.5 339.7L624.5 339.7M657.5 339.7L665.5 339.7M584.7 234.4L624.5 234.4M602.3 234.4L602.3 217.5L632.6 217.5L632.6 226M649.7 226L649.7 217.5L679.7 217.5L679.7 242.5M570 242.5L624.5 242.5M570 250.6L624.5 250.6M586.4 266.8L624.5 266.8M570 274.9L624.5 274.9M570 283L624.5 283M586.4 299.2L624.5 299.2M657.5 234.4L744.8 234.4M657.5 242.5L689.8 242.5M657.5 250.6L728.6 250.6M657.5 258.7L728.6 258.7M657.5 266.8L728.6 266.8M657.5 274.9L728.6 274.9M657.5 283L728.6 283M657.5 291.1L728.6 291.1M728.6 250.6L728.6 266.8M728.6 274.9L728.6 291.1M657.5 299.2L689.8 299.2M633.3 356.3L633.3 391.4M649.8 356.3L649.8 372.5M620 372.5L649.8 372.5M620 380.8L633.3 380.8M596.5 372.5L614.7 372.5M596.5 380.8L614.7 380.8M559.4 492.6L568 492.6L568 510.3L559.4 510.3ZM568 496.7L655.6 496.7M568 506.9L655.6 506.9M608.7 458.5L608.7 476.7M608.7 480.4L608.7 496.7M608.7 496.7L608.7 523.4M608.7 531L608.7 546.5M605.7 523.4L611.7 523.4L611.7 531L605.7 531ZM624.4 458.5L624.4 476.7M624.4 480.4L624.4 506.9M624.4 506.9L624.4 523.4M624.4 531L624.4 546.5M621.4 523.4L627.4 523.4L627.4 531L621.4 531ZM645.1 613.2L645.1 629.5M645.1 633.5L645.1 647.3M618.5 647.3L655.2 647.3M655.2 647.3L656.5 645L659.1 649.6L661.7 645L664.3 649.6L666.9 645L669.5 649.6L670.8 647.3M670.8 647.3L685.7 647.3M685.7 643.2L698.6 643.2L698.6 655.5L685.7 655.5ZM685.7 651.1L645.1 651.1L645.1 661.2M529.5 753.3L627 753.3M529.5 759.6L600.2 759.6L600.2 765.5L627 765.5M559.6 759.6L559.6 778M559.6 786.3L559.6 798M557 778L562.2 778L562.2 786.3L557 786.3ZM577.9 753.3L577.9 778M577.9 786.3L577.9 798M575.3 778L580.5 778L580.5 786.3L575.3 786.3ZM592.3 759.6L592.3 775.5M592.3 779.5L592.3 797M608.4 753.3L608.4 775.5M608.4 779.5L608.4 797M633 748.9L646 748.9L650.2 753.1L650.2 766.1L646 770.3L633 770.3L628.8 766.1L628.8 753.1ZM1101.3 657.4L1129.8 657.4L1129.8 698.2L1101.3 698.2ZM1016.1 661.7L1101.3 661.7M1021.8 669.9L1101.3 669.9M1021.8 678.2L1101.3 678.2M1094 686L1101.3 686M1101.3 694.4L1087.2 694.4L1087.2 722.3M1048.3 678.2L1048.3 722.3M1045.9 701.2L1050.7 701.2M1056.5 669.9L1056.5 722.3M1054.1 701.2L1058.9 701.2M1072.7 661.7L1072.7 722.3M1070.3 701.2L1075.1 701.2M1117.4 657.4L1117.4 649.4M1123.6 657.4L1123.6 649.4M1117.4 649.4L1142.4 649.4L1142.4 661.6L1207.5 661.6L1207.5 729M1117.4 698.2L1117.4 706.6M1123.6 698.2L1123.6 706.6M1117.4 706.6L1142.4 706.6L1142.4 678.2L1207.5 678.2M1059 757.6L1063.6 757.6M1061.3 755.3L1061.3 759.9M1091.3 757.6L1095.9 757.6M1093.6 755.3L1093.6 759.9" stroke="#585858" stroke-width=".72" fill="none"/>
<path d="M584.7 231.4L584.7 237.4M582.7 232.4L582.7 236.4M580.7 233.6L580.7 235.2M570 240.8L564 240.8L562.5 242.5L564 244.2L570 244.2ZM570 248.9L564 248.9L562.5 250.6L564 252.3L570 252.3ZM586.4 263.8L586.4 269.8M584.4 264.8L584.4 268.8M582.4 266L582.4 267.6M570 273.2L564 273.2L562.5 274.9L564 276.6L570 276.6ZM570 281.3L564 281.3L562.5 283L564 284.7L570 284.7ZM586.4 296.2L586.4 302.2M584.4 297.2L584.4 301.2M582.4 298.4L582.4 300M689.8 239.5L689.8 245.5M691.8 240.5L691.8 244.5M693.8 241.7L693.8 243.3M728.6 250.6L743.7 250.6M751.2 248.9L745.2 248.9L743.7 250.6L745.2 252.3L751.2 252.3ZM728.6 283L743.7 283M751.2 281.3L745.2 281.3L743.7 283L745.2 284.7L751.2 284.7ZM689.8 296.2L689.8 302.2M691.8 297.2L691.8 301.2M693.8 298.4L693.8 300M609.5 368.5L612.5 368.5L612.5 371L609.5 371ZM609.5 376.5L612.5 376.5L612.5 379.3L609.5 379.3ZM596.5 368L596.5 372.5M596.5 380.8L596.5 385M663.1 495L657.1 495L655.6 496.7L657.1 498.4L663.1 498.4ZM663.1 505.2L657.1 505.2L655.6 506.9L657.1 508.6L663.1 508.6ZM604.3 458.5L613.1 458.5M606.1 456.2L611.3 456.2M607.8 453.9L609.6 453.9M604.3 547L613.1 547M606.1 549.3L611.3 549.3M607.8 551.6L609.6 551.6M620 458.5L628.8 458.5M621.8 456.2L627 456.2M623.5 453.9L625.3 453.9M620 547L628.8 547M621.8 549.3L627 549.3M623.5 551.6L625.3 551.6M640.7 613.2L649.5 613.2M642.5 610.9L647.7 610.9M644.2 608.6L646 608.6M640.7 661.4L649.5 661.4M642.5 663.7L647.7 663.7M644.2 666L646 666M529.5 751.6L523.5 751.6L522 753.3L523.5 755L529.5 755ZM529.5 757.9L523.5 757.9L522 759.6L523.5 761.3L529.5 761.3ZM555.4 798.3L563.8 798.3M557.1 800.6L562.1 800.6M558.8 802.9L560.4 802.9M573.7 798.3L582.1 798.3M575.4 800.6L580.4 800.6M577.1 802.9L578.7 802.9M588.1 797L596.5 797M589.8 799.3L594.8 799.3M591.5 801.6L593.1 801.6M604.2 797L612.6 797M605.9 799.3L610.9 799.3M607.6 801.6L609.2 801.6M1021.8 668.2L1015.8 668.2L1014.3 669.9L1015.8 671.6L1021.8 671.6ZM1021.8 676.5L1015.8 676.5L1014.3 678.2L1015.8 679.9L1021.8 679.9ZM1083.6 722.3L1090.8 722.3M1085 724.6L1089.4 724.6M1086.5 726.9L1087.9 726.9M1044.7 722.3L1051.9 722.3M1046.1 724.6L1050.5 724.6M1047.6 726.9L1049 726.9M1052.9 722.3L1060.1 722.3M1054.3 724.6L1058.7 724.6M1055.8 726.9L1057.2 726.9M1069.1 722.3L1076.3 722.3M1070.5 724.6L1074.9 724.6M1072 726.9L1073.4 726.9M1202.5 729L1212.5 729M1204.5 731.3L1210.5 731.3M1206.5 733.6L1208.5 733.6" stroke="#8a8a8a" stroke-width=".7" fill="none"/>
<path d="M614.7 368L614.7 385M618.2 369L618.2 384M603.7 476.5L613.7 476.5M603.7 480.5L613.7 480.5M619.4 476.5L629.4 476.5M619.4 480.5L629.4 480.5M640.3 629.5L649.9 629.5M640.3 633.5L649.9 633.5M587.8 775.5L596.8 775.5M587.8 779.5L596.8 779.5M603.9 775.5L612.9 775.5M603.9 779.5L612.9 779.5" stroke="#1c1c1c" stroke-width="1.25" fill="none"/>
<path d="M606.1 524L611.3 524L608.7 527Z M606.1 530.5L611.3 530.5L608.7 527.5ZM621.8 524L627 524L624.4 527Z M621.8 530.5L627 530.5L624.4 527.5ZM557.3 778.5L561.9 778.5L559.6 781.8Z M557.3 785.8L561.9 785.8L559.6 782.5ZM575.6 778.5L580.2 778.5L577.9 781.8Z M575.6 785.8L580.2 785.8L577.9 782.5ZM637.8 754.6h3.4v3.6h-3.4Z M638.5 759.8h2v2.6h-2Z M637.3 765.2h4.4v1.2h-4.4ZM1046.1 705.5L1050.5 705.5L1048.3 701.3ZM1054.3 705.5L1058.7 705.5L1056.5 701.3ZM1070.5 705.5L1074.9 705.5L1072.7 701.3Z" fill="#111"/>
<g fill="none" stroke="#555" stroke-width=".8"><circle cx="746.8" cy="234.4" r="2"/><circle cx="633.3" cy="393.4" r="2"/><circle cx="606.5" cy="376.5" r="13.4"/><circle cx="616.5" cy="647.3" r="2"/><circle cx="639.5" cy="759.6" r="8"/><circle cx="639.5" cy="761.2" r="2.4" stroke-width="1.3" stroke="#222"/><circle cx="1014.1" cy="661.7" r="2"/><circle cx="1061.3" cy="757.6" r="1.7"/><circle cx="1093.6" cy="757.6" r="1.7"/></g>
<g fill="#222"><circle cx="602.3" cy="234.4" r="1.15"/><circle cx="679.7" cy="242.5" r="1.15"/><circle cx="728.6" cy="250.6" r="1.15"/><circle cx="728.6" cy="258.7" r="1.15"/><circle cx="728.6" cy="283" r="1.15"/><circle cx="633.3" cy="372.5" r="1.15"/><circle cx="633.3" cy="380.8" r="1.15"/><circle cx="608.7" cy="496.7" r="1.15"/><circle cx="624.4" cy="506.9" r="1.15"/><circle cx="645.1" cy="647.3" r="1.1"/><circle cx="577.9" cy="753.3" r="1.15"/><circle cx="608.4" cy="753.3" r="1.15"/><circle cx="559.6" cy="759.6" r="1.15"/><circle cx="592.3" cy="759.6" r="1.15"/><circle cx="1048.3" cy="678.2" r="1.15"/><circle cx="1056.5" cy="669.9" r="1.15"/><circle cx="1072.7" cy="661.7" r="1.15"/><circle cx="1123.6" cy="649.4" r="1.15"/><circle cx="1123.6" cy="706.6" r="1.15"/><circle cx="1207.5" cy="678.2" r="1.15"/></g>
<g><text x="620.3" y="233.6" font-size="3.6" fill="#484848" font-family="Liberation Sans,sans-serif" text-anchor="middle">28</text><text x="661" y="233.6" font-size="3.6" fill="#484848" font-family="Liberation Sans,sans-serif" text-anchor="middle">1</text><text x="620.3" y="241.7" font-size="3.6" fill="#484848" font-family="Liberation Sans,sans-serif" text-anchor="middle">27</text><text x="661" y="241.7" font-size="3.6" fill="#484848" font-family="Liberation Sans,sans-serif" text-anchor="middle">2</text><text x="620.3" y="249.8" font-size="3.6" fill="#484848" font-family="Liberation Sans,sans-serif" text-anchor="middle">26</text><text x="661" y="249.8" font-size="3.6" fill="#484848" font-family="Liberation Sans,sans-serif" text-anchor="middle">3</text><text x="620.3" y="257.9" font-size="3.6" fill="#484848" font-family="Liberation Sans,sans-serif" text-anchor="middle">25</text><text x="661" y="257.9" font-size="3.6" fill="#484848" font-family="Liberation Sans,sans-serif" text-anchor="middle">4</text><text x="620.3" y="266" font-size="3.6" fill="#484848" font-family="Liberation Sans,sans-serif" text-anchor="middle">24</text><text x="661" y="266" font-size="3.6" fill="#484848" font-family="Liberation Sans,sans-serif" text-anchor="middle">5</text><text x="620.3" y="274.1" font-size="3.6" fill="#484848" font-family="Liberation Sans,sans-serif" text-anchor="middle">23</text><text x="661" y="274.1" font-size="3.6" fill="#484848" font-family="Liberation Sans,sans-serif" text-anchor="middle">6</text><text x="620.3" y="282.2" font-size="3.6" fill="#484848" font-family="Liberation Sans,sans-serif" text-anchor="middle">22</text><text x="661" y="282.2" font-size="3.6" fill="#484848" font-family="Liberation Sans,sans-serif" text-anchor="middle">7</text><text x="620.3" y="290.3" font-size="3.6" fill="#484848" font-family="Liberation Sans,sans-serif" text-anchor="middle">21</text><text x="661" y="290.3" font-size="3.6" fill="#484848" font-family="Liberation Sans,sans-serif" text-anchor="middle">8</text><text x="620.3" y="298.4" font-size="3.6" fill="#484848" font-family="Liberation Sans,sans-serif" text-anchor="middle">20</text><text x="661" y="298.4" font-size="3.6" fill="#484848" font-family="Liberation Sans,sans-serif" text-anchor="middle">9</text><text x="620.3" y="306.5" font-size="3.6" fill="#484848" font-family="Liberation Sans,sans-serif" text-anchor="middle">19</text><text x="661" y="306.5" font-size="3.6" fill="#484848" font-family="Liberation Sans,sans-serif" text-anchor="middle">10</text><text x="620.3" y="314.6" font-size="3.6" fill="#484848" font-family="Liberation Sans,sans-serif" text-anchor="middle">18</text><text x="661" y="314.6" font-size="3.6" fill="#484848" font-family="Liberation Sans,sans-serif" text-anchor="middle">11</text><text x="620.3" y="322.7" font-size="3.6" fill="#484848" font-family="Liberation Sans,sans-serif" text-anchor="middle">17</text><text x="661" y="322.7" font-size="3.6" fill="#484848" font-family="Liberation Sans,sans-serif" text-anchor="middle">12</text><text x="620.3" y="330.8" font-size="3.6" fill="#484848" font-family="Liberation Sans,sans-serif" text-anchor="middle">16</text><text x="661" y="330.8" font-size="3.6" fill="#484848" font-family="Liberation Sans,sans-serif" text-anchor="middle">13</text><text x="620.3" y="338.9" font-size="3.6" fill="#484848" font-family="Liberation Sans,sans-serif" text-anchor="middle">15</text><text x="661" y="338.9" font-size="3.6" fill="#484848" font-family="Liberation Sans,sans-serif" text-anchor="middle">14</text><text x="636" y="224" font-size="3.4" fill="#484848" font-family="Liberation Sans,sans-serif" transform="rotate(-90 636 224)">29</text><text x="653" y="224" font-size="3.4" fill="#484848" font-family="Liberation Sans,sans-serif" transform="rotate(-90 653 224)">30</text><text x="641" y="224.5" font-size="3.4" fill="#484848" font-family="Liberation Sans,sans-serif" text-anchor="middle">J4</text><text x="561" y="243.8" font-size="3.8" fill="#484848" font-family="Liberation Sans,sans-serif" text-anchor="end">USB_DP</text><text x="538.5" y="243.8" font-size="3.8" fill="#484848" font-family="Liberation Sans,sans-serif">[1]</text><text x="561" y="251.9" font-size="3.8" fill="#484848" font-family="Liberation Sans,sans-serif" text-anchor="end">USB_DM</text><text x="538.5" y="251.9" font-size="3.8" fill="#484848" font-family="Liberation Sans,sans-serif">[1]</text><text x="561" y="276.2" font-size="3.8" fill="#484848" font-family="Liberation Sans,sans-serif" text-anchor="end">MICN0</text><text x="538" y="276.2" font-size="3.8" fill="#484848" font-family="Liberation Sans,sans-serif">[1]</text><text x="561" y="284.3" font-size="3.8" fill="#484848" font-family="Liberation Sans,sans-serif" text-anchor="end">MICP0</text><text x="538" y="284.3" font-size="3.8" fill="#484848" font-family="Liberation Sans,sans-serif">[1]</text><text x="751.4" y="235.8" font-size="4" fill="#484848" font-family="Liberation Sans,sans-serif" textLength="18" lengthAdjust="spacingAndGlyphs">VBIA_PMU</text><text x="665.5" y="250.8" font-size="3.6" fill="#484848" font-family="Liberation Sans,sans-serif">SPK+</text><text x="665.5" y="258.9" font-size="3.6" fill="#484848" font-family="Liberation Sans,sans-serif">SPK+</text><text x="665.5" y="267" font-size="3.6" fill="#484848" font-family="Liberation Sans,sans-serif">SPK+</text><text x="665.5" y="275.1" font-size="3.6" fill="#484848" font-family="Liberation Sans,sans-serif">SPK-</text><text x="665.5" y="283.2" font-size="3.6" fill="#484848" font-family="Liberation Sans,sans-serif">SPK-</text><text x="665.5" y="291.3" font-size="3.6" fill="#484848" font-family="Liberation Sans,sans-serif">SPK-</text><text x="751.6" y="252" font-size="4" fill="#484848" font-family="Liberation Sans,sans-serif">SPK+</text><text x="768.5" y="252" font-size="3.8" fill="#484848" font-family="Liberation Sans,sans-serif">[1]</text><text x="751.6" y="284.4" font-size="4" fill="#484848" font-family="Liberation Sans,sans-serif">SPK-</text><text x="768.5" y="284.4" font-size="3.8" fill="#484848" font-family="Liberation Sans,sans-serif">[1]</text><text x="636.5" y="362" font-size="3.4" fill="#484848" font-family="Liberation Sans,sans-serif" transform="rotate(-90 636.5 362)">32</text><text x="653" y="362" font-size="3.4" fill="#484848" font-family="Liberation Sans,sans-serif" transform="rotate(-90 653 362)">31</text><text x="636.7" y="406" font-size="3.8" fill="#484848" font-family="Liberation Sans,sans-serif" transform="rotate(-90 636.7 406)">VBUS</text><text x="653.3" y="369.6" font-size="3.8" fill="#484848" font-family="Liberation Sans,sans-serif" textLength="29.5" lengthAdjust="spacingAndGlyphs">WP25D-40200/A1</text><text x="621.5" y="378" font-size="3" fill="#484848" font-family="Liberation Sans,sans-serif" transform="rotate(-90 621.5 378)">TVS</text><text x="570" y="496" font-size="3.4" fill="#484848" font-family="Liberation Sans,sans-serif">1</text><text x="570" y="506" font-size="3.4" fill="#484848" font-family="Liberation Sans,sans-serif">2</text><text x="565" y="498" font-size="3.2" fill="#484848" font-family="Liberation Sans,sans-serif" text-anchor="middle">1</text><text x="565" y="508.2" font-size="3.2" fill="#484848" font-family="Liberation Sans,sans-serif" text-anchor="middle">1</text><text x="563.7" y="490.8" font-size="3.8" fill="#484848" font-family="Liberation Sans,sans-serif" text-anchor="middle">J5</text><text x="551" y="514.3" font-size="3.8" fill="#484848" font-family="Liberation Sans,sans-serif" textLength="24.5" lengthAdjust="spacingAndGlyphs">CON-2PIN-FPC</text><text x="665.8" y="498.1" font-size="4" fill="#484848" font-family="Liberation Sans,sans-serif">SPK+</text><text x="665.8" y="508.3" font-size="4" fill="#484848" font-family="Liberation Sans,sans-serif">SPK-</text><text x="680" y="498.1" font-size="3.8" fill="#484848" font-family="Liberation Sans,sans-serif">[1]</text><text x="680" y="508.3" font-size="3.8" fill="#484848" font-family="Liberation Sans,sans-serif">[1]</text><text x="602.7" y="478" font-size="3.6" fill="#484848" font-family="Liberation Sans,sans-serif" text-anchor="end">33pF</text><text x="602.7" y="482" font-size="3.6" fill="#484848" font-family="Liberation Sans,sans-serif" text-anchor="end">C3</text><text x="602.2" y="528" font-size="3.2" fill="#484848" font-family="Liberation Sans,sans-serif" transform="rotate(-90 602.2 528)">T3</text><text x="607.5" y="543" font-size="3" fill="#484848" font-family="Liberation Sans,sans-serif" transform="rotate(-90 607.5 543)">NC</text><text x="630.9" y="478" font-size="3.6" fill="#484848" font-family="Liberation Sans,sans-serif">33pF</text><text x="630.9" y="482" font-size="3.6" fill="#484848" font-family="Liberation Sans,sans-serif">C4</text><text x="619.4" y="528.5" font-size="3.2" fill="#484848" font-family="Liberation Sans,sans-serif" transform="rotate(-90 619.4 528.5)">T4</text><text x="623.2" y="543" font-size="3" fill="#484848" font-family="Liberation Sans,sans-serif" transform="rotate(-90 623.2 543)">NC</text><text x="651.4" y="629.7" font-size="3.4" fill="#484848" font-family="Liberation Sans,sans-serif">nF</text><text x="651.4" y="633.9" font-size="3.4" fill="#484848" font-family="Liberation Sans,sans-serif">C5</text><text x="612.8" y="648.7" font-size="4" fill="#484848" font-family="Liberation Sans,sans-serif" text-anchor="end" textLength="18.3" lengthAdjust="spacingAndGlyphs">VBIA_PMU</text><text x="651.4" y="645.5" font-size="3.4" fill="#484848" font-family="Liberation Sans,sans-serif">R7</text><text x="672.5" y="645.5" font-size="3.4" fill="#484848" font-family="Liberation Sans,sans-serif">0R</text><text x="686" y="627.3" font-size="3.6" fill="#484848" font-family="Liberation Sans,sans-serif">J6</text><text x="673.4" y="634" font-size="3.8" fill="#484848" font-family="Liberation Sans,sans-serif" textLength="25" lengthAdjust="spacingAndGlyphs">1271_VIB_FPC</text><text x="690" y="648.6" font-size="3.4" fill="#484848" font-family="Liberation Sans,sans-serif">P+</text><text x="690" y="652.8" font-size="3.4" fill="#484848" font-family="Liberation Sans,sans-serif">P-</text><text x="520.8" y="754.6" font-size="3.8" fill="#484848" font-family="Liberation Sans,sans-serif" text-anchor="end">MICP0</text><text x="520.8" y="761" font-size="3.8" fill="#484848" font-family="Liberation Sans,sans-serif" text-anchor="end">MICN0</text><text x="500.5" y="754.6" font-size="3.6" fill="#484848" font-family="Liberation Sans,sans-serif">[1]</text><text x="500.5" y="761" font-size="3.6" fill="#484848" font-family="Liberation Sans,sans-serif">[1]</text><text x="555.1" y="784" font-size="3.2" fill="#484848" font-family="Liberation Sans,sans-serif" transform="rotate(-90 555.1 784)">T</text><text x="573.4" y="784" font-size="3.2" fill="#484848" font-family="Liberation Sans,sans-serif" transform="rotate(-90 573.4 784)">T</text><text x="587.3" y="775" font-size="3.4" fill="#484848" font-family="Liberation Sans,sans-serif" text-anchor="end">C1</text><text x="587.3" y="784.5" font-size="3.2" fill="#484848" font-family="Liberation Sans,sans-serif" text-anchor="end">33pF</text><text x="603.4" y="775" font-size="3.4" fill="#484848" font-family="Liberation Sans,sans-serif" text-anchor="end">C2</text><text x="603.4" y="784.5" font-size="3.2" fill="#484848" font-family="Liberation Sans,sans-serif" text-anchor="end">33pF</text><text x="639.5" y="747" font-size="3.6" fill="#484848" font-family="Liberation Sans,sans-serif" text-anchor="middle">K1</text><text x="623.8" y="778.8" font-size="3.8" fill="#484848" font-family="Liberation Sans,sans-serif" textLength="30.8" lengthAdjust="spacingAndGlyphs">B4013AM422-092</text><text x="626.5" y="752.3" font-size="3.2" fill="#484848" font-family="Liberation Sans,sans-serif" text-anchor="end">OUT</text><text x="626.5" y="768.5" font-size="3.2" fill="#484848" font-family="Liberation Sans,sans-serif" text-anchor="end">GND</text><text x="625" y="757" font-size="3.2" fill="#484848" font-family="Liberation Sans,sans-serif" text-anchor="end">1</text><text x="625" y="764.3" font-size="3.2" fill="#484848" font-family="Liberation Sans,sans-serif" text-anchor="end">2</text><text x="1011.3" y="663" font-size="3.8" fill="#484848" font-family="Liberation Sans,sans-serif" text-anchor="end">VBUS</text><text x="1013.3" y="671.2" font-size="3.8" fill="#484848" font-family="Liberation Sans,sans-serif" text-anchor="end">USB_DM</text><text x="988.8" y="670.5" font-size="3.6" fill="#484848" font-family="Liberation Sans,sans-serif">[1]</text><text x="1013.3" y="679.5" font-size="3.8" fill="#484848" font-family="Liberation Sans,sans-serif" text-anchor="end">USB_DP</text><text x="988.8" y="678.8" font-size="3.6" fill="#484848" font-family="Liberation Sans,sans-serif">[1]</text><text x="1045.6" y="701" font-size="3.2" fill="#484848" font-family="Liberation Sans,sans-serif" transform="rotate(-90 1045.6 701)">ESD5311N</text><text x="1054" y="701" font-size="3.2" fill="#484848" font-family="Liberation Sans,sans-serif" transform="rotate(-90 1054 701)">ESD5311N</text><text x="1045.6" y="712" font-size="3.2" fill="#484848" font-family="Liberation Sans,sans-serif" transform="rotate(-90 1045.6 712)">T1</text><text x="1054" y="712" font-size="3.2" fill="#484848" font-family="Liberation Sans,sans-serif" transform="rotate(-90 1054 712)">T2</text><text x="1078.5" y="706.5" font-size="3.2" fill="#484848" font-family="Liberation Sans,sans-serif" transform="rotate(-90 1078.5 706.5)">D1</text><text x="1096" y="660.3" font-size="3.6" fill="#484848" font-family="Liberation Sans,sans-serif">1</text><text x="1096" y="668.5" font-size="3.6" fill="#484848" font-family="Liberation Sans,sans-serif">2</text><text x="1096" y="676.8" font-size="3.6" fill="#484848" font-family="Liberation Sans,sans-serif">3</text><text x="1096" y="684.6" font-size="3.6" fill="#484848" font-family="Liberation Sans,sans-serif">4</text><text x="1096" y="693" font-size="3.6" fill="#484848" font-family="Liberation Sans,sans-serif">5</text><text x="1103" y="663.2" font-size="4" fill="#484848" font-family="Liberation Sans,sans-serif">VBUS</text><text x="1103" y="671.3" font-size="4" fill="#484848" font-family="Liberation Sans,sans-serif">D-</text><text x="1103" y="679.6" font-size="4" fill="#484848" font-family="Liberation Sans,sans-serif">D+</text><text x="1103" y="687.4" font-size="4" fill="#484848" font-family="Liberation Sans,sans-serif">ID</text><text x="1103" y="695.8" font-size="4" fill="#484848" font-family="Liberation Sans,sans-serif">GND</text><text x="1106.7" y="655.5" font-size="3.6" fill="#484848" font-family="Liberation Sans,sans-serif">J1</text><text x="1119" y="665.5" font-size="3" fill="#484848" font-family="Liberation Sans,sans-serif" transform="rotate(-90 1119 665.5)">GND</text><text x="1125.2" y="665.5" font-size="3" fill="#484848" font-family="Liberation Sans,sans-serif" transform="rotate(-90 1125.2 665.5)">GND</text><text x="1119" y="697" font-size="3" fill="#484848" font-family="Liberation Sans,sans-serif" transform="rotate(-90 1119 697)">GND</text><text x="1125.2" y="697" font-size="3" fill="#484848" font-family="Liberation Sans,sans-serif" transform="rotate(-90 1125.2 697)">GND</text><text x="1119.5" y="655.5" font-size="3" fill="#484848" font-family="Liberation Sans,sans-serif">6</text><text x="1125.5" y="655.5" font-size="3" fill="#484848" font-family="Liberation Sans,sans-serif">9</text><text x="1119.5" y="703.5" font-size="3" fill="#484848" font-family="Liberation Sans,sans-serif">7</text><text x="1125.5" y="703.5" font-size="3" fill="#484848" font-family="Liberation Sans,sans-serif">8</text><text x="1060.5" y="754.5" font-size="3.6" fill="#484848" font-family="Liberation Sans,sans-serif" text-anchor="middle">MARK1</text><text x="1058" y="759" font-size="3.4" fill="#484848" font-family="Liberation Sans,sans-serif" text-anchor="end">1</text><text x="1060.5" y="763.5" font-size="3.8" fill="#484848" font-family="Liberation Sans,sans-serif" text-anchor="middle" textLength="29" lengthAdjust="spacingAndGlyphs">FIDUCIAL_PANEL</text><text x="1092.8" y="754.5" font-size="3.6" fill="#484848" font-family="Liberation Sans,sans-serif" text-anchor="middle">MARK2</text><text x="1090.3" y="759" font-size="3.4" fill="#484848" font-family="Liberation Sans,sans-serif" text-anchor="end">1</text><text x="1092.8" y="763.5" font-size="3.8" fill="#484848" font-family="Liberation Sans,sans-serif" text-anchor="middle" textLength="29" lengthAdjust="spacingAndGlyphs">FIDUCIAL_PANEL</text><text x="428.5" y="198.8" font-size="15" fill="#333" font-family="Liberation Serif,Noto Serif CJK SC,serif" textLength="20.5" lengthAdjust="spacingAndGlyphs">BTB</text><text x="427.3" y="473.7" font-size="15" fill="#333" font-family="Liberation Serif,Noto Serif CJK SC,serif" textLength="72" lengthAdjust="spacingAndGlyphs">SPK/MIC/VIB</text><text x="907.3" y="200.8" font-size="15" fill="#333" font-family="Liberation Serif,Noto Serif CJK SC,serif" textLength="78.4" lengthAdjust="spacingAndGlyphs">Main Antenna</text><text x="908" y="462.7" font-size="15" fill="#333" font-family="Liberation Serif,Noto Serif CJK SC,serif" textLength="19" lengthAdjust="spacingAndGlyphs">OVP</text><text x="912.8" y="638.7" font-size="15" fill="#333" font-family="Liberation Serif,Noto Serif CJK SC,serif" textLength="19.5" lengthAdjust="spacingAndGlyphs">USB</text><text x="1288.5" y="168.6" font-size="3.6" fill="#3a3a3a" font-family="Liberation Sans,sans-serif" text-anchor="middle" textLength="32" lengthAdjust="spacingAndGlyphs">REVISION RECORD</text><text x="1231" y="177" font-size="3.6" fill="#3a3a3a" font-family="Liberation Sans,sans-serif" text-anchor="middle">LTR</text><text x="1271" y="177" font-size="3.6" fill="#3a3a3a" font-family="Liberation Sans,sans-serif" text-anchor="middle">ECO NO:</text><text x="1321.5" y="177" font-size="3.6" fill="#3a3a3a" font-family="Liberation Sans,sans-serif" text-anchor="middle" textLength="19" lengthAdjust="spacingAndGlyphs">APPROVED:</text><text x="1347.5" y="177" font-size="3.6" fill="#3a3a3a" font-family="Liberation Sans,sans-serif" text-anchor="middle">DATE:</text><text x="754" y="779.2" font-size="3.8" fill="#444" font-family="Liberation Sans,sans-serif" textLength="18" lengthAdjust="spacingAndGlyphs">COMPANY:</text><text x="828.4" y="791" font-size="8.5" fill="#222" font-family="DejaVu Sans,Liberation Sans,sans-serif" textLength="45.4" lengthAdjust="spacingAndGlyphs">SZ-ITEL-RD</text><text x="753.7" y="814.5" font-size="9.3" fill="#222" font-family="DejaVu Sans,Liberation Sans,sans-serif" textLength="33.6" lengthAdjust="spacingAndGlyphs">DRAWN</text><text x="803" y="814.5" font-size="8.5" fill="#222" font-family="DejaVu Sans,Liberation Sans,sans-serif" textLength="10.5" lengthAdjust="spacingAndGlyphs">SH</text><text x="834.7" y="814.8" font-size="9.3" fill="#222" font-family="DejaVu Sans,Liberation Sans,sans-serif" textLength="29" lengthAdjust="spacingAndGlyphs">DATED</text><text x="910.8" y="814.3" font-size="8.5" fill="#222" font-family="DejaVu Sans,Liberation Sans,sans-serif" textLength="16.5" lengthAdjust="spacingAndGlyphs">&lt;  &gt;</text><text x="753.7" y="830.5" font-size="9.3" fill="#222" font-family="DejaVu Sans,Liberation Sans,sans-serif" textLength="41.3" lengthAdjust="spacingAndGlyphs">CHECKED</text><text x="805" y="830.5" font-size="8.5" fill="#222" font-family="DejaVu Sans,Liberation Sans,sans-serif" textLength="17" lengthAdjust="spacingAndGlyphs">&lt;  &gt;</text><text x="834.7" y="830.2" font-size="9.3" fill="#222" font-family="DejaVu Sans,Liberation Sans,sans-serif" textLength="29" lengthAdjust="spacingAndGlyphs">DATED</text><text x="910.8" y="829.8" font-size="8.5" fill="#222" font-family="DejaVu Sans,Liberation Sans,sans-serif" textLength="16.5" lengthAdjust="spacingAndGlyphs">&lt;  &gt;</text><text x="960.3" y="791.3" font-size="9.3" fill="#222" font-family="DejaVu Sans,Liberation Sans,sans-serif" textLength="33.7" lengthAdjust="spacingAndGlyphs">MODEL:</text><text x="961" y="814" font-size="9.3" fill="#222" font-family="DejaVu Sans,Liberation Sans,sans-serif" textLength="27" lengthAdjust="spacingAndGlyphs">TITLE:</text><text x="956.7" y="832.8" font-size="9.3" fill="#222" font-family="DejaVu Sans,Liberation Sans,sans-serif" textLength="65.3" lengthAdjust="spacingAndGlyphs">Confidentiality</text><text x="1048" y="792.5" font-size="12.5" fill="#222" font-family="DejaVu Sans,Liberation Sans,sans-serif" textLength="35.3" lengthAdjust="spacingAndGlyphs">F3108</text><text x="1046.5" y="812.8" font-size="8.8" fill="#222" font-family="DejaVu Sans,Liberation Sans,sans-serif" textLength="54.5" lengthAdjust="spacingAndGlyphs">SUB_BOARD</text><text x="1044.6" y="833.3" font-size="8.8" fill="#222" font-family="DejaVu Sans,Liberation Sans,sans-serif" textLength="66.3" lengthAdjust="spacingAndGlyphs">CONFIDENTIAL</text><text x="1168.4" y="792" font-size="9.3" fill="#222" font-family="DejaVu Sans,Liberation Sans,sans-serif" textLength="65.6" lengthAdjust="spacingAndGlyphs">Modified Date:</text><text x="1275.4" y="792" font-size="9.3" fill="#222" font-family="DejaVu Sans,Liberation Sans,sans-serif" textLength="45" lengthAdjust="spacingAndGlyphs">2019/2/22</text><text x="1168.4" y="822" font-size="9.3" fill="#222" font-family="DejaVu Sans,Liberation Sans,sans-serif" textLength="43" lengthAdjust="spacingAndGlyphs">VERSION:</text><text x="1220.9" y="822" font-size="9.3" fill="#222" font-family="DejaVu Sans,Liberation Sans,sans-serif" textLength="19.5" lengthAdjust="spacingAndGlyphs">V1.0</text><text x="1257.7" y="822" font-size="9.3" fill="#222" font-family="DejaVu Sans,Liberation Sans,sans-serif" textLength="31" lengthAdjust="spacingAndGlyphs">SHEET:</text><text x="1296" y="822" font-size="9.3" fill="#222" font-family="DejaVu Sans,Liberation Sans,sans-serif">1</text><text x="1312.7" y="822" font-size="9.3" fill="#222" font-family="DejaVu Sans,Liberation Sans,sans-serif" textLength="11.5" lengthAdjust="spacingAndGlyphs">OF</text><text x="1335" y="822" font-size="9.3" fill="#222" font-family="DejaVu Sans,Liberation Sans,sans-serif">2</text></g>
</svg>
<div class="abs" style="left:1505px;top:161px;width:15px;height:673px;background:#fff"></div>
<div class="abs" style="left:1505px;top:178px;width:15px;height:320px;background:#dcdcdc;border-bottom:1px solid #909090"></div>
<svg class="abs" style="left:1509px;top:333px" width="9" height="10" viewBox="0 0 9 10"><path d="M1 2.100h7M1 4.900h7M1 7.700h7" stroke="#4c4c4c" stroke-width="1.700"/></svg>
<svg class="abs" style="left:1509px;top:167.500px" width="9" height="6" viewBox="0 0 9 6"><path d="M.7 5.300 L4.500 1.200 L8.300 5.300" fill="none" stroke="#505050" stroke-width="1.150"/></svg>
<div class="abs" style="left:1505px;top:820px;width:15px;height:1px;background:#d8d8d8"></div>
<svg class="abs" style="left:1509px;top:826px" width="9" height="6" viewBox="0 0 9 6"><path d="M.7 .7 L4.500 4.800 L8.300 .7" fill="none" stroke="#444" stroke-width="1.300"/></svg>
<div class="abs" style="left:1520px;top:31px;width:1px;height:828px;background:#6bc6ea"></div></body></html>
